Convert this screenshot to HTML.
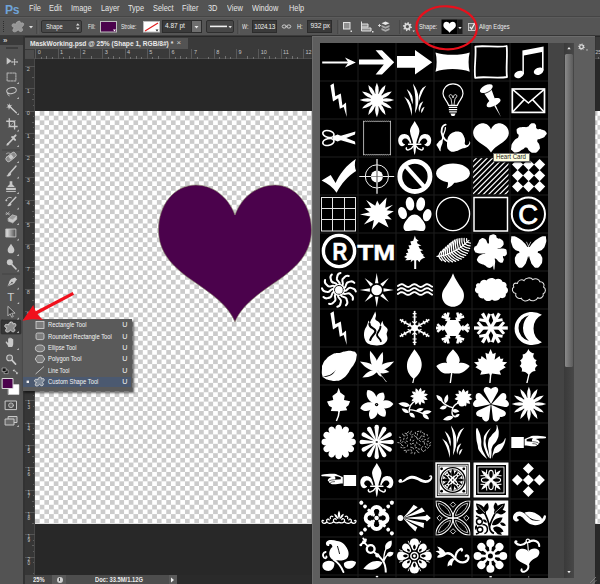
<!DOCTYPE html><html><head><meta charset="utf-8"><title>Photoshop Custom Shape Tool</title><style>
html,body{margin:0;padding:0;}
body{width:600px;height:584px;overflow:hidden;background:#282828;position:relative;font-family:"Liberation Sans","DejaVu Sans",sans-serif;color:#e0e0e0;}
.a{position:absolute;}
.t{position:absolute;white-space:nowrap;line-height:1;}
svg{position:absolute;overflow:visible;}
</style></head><body>
<div class="a" style="left:0px;top:36px;width:600px;height:548px;background:#282828;"></div>
<div class="a" style="left:35px;top:110.6px;width:565px;height:413.7px;background:conic-gradient(#cbcbcb 25%,#fff 0 50%,#cbcbcb 0 75%,#fff 0) 0 0/9.375px 9.375px;"></div>
<svg style="left:0;top:0" width="600" height="584"><path d="M235,215 C228,196 212,185 196,185 C174,185 158.5,205 158.5,230 C158.5,252 172,266 190,279 C212,294 228,305 235,322 C242,305 258,294 280,279 C298,266 311.5,252 311.5,230 C311.5,205 296,185 275,185 C258,185 242,196 235,215 Z" fill="#4b024c" stroke="#8a8a6a" stroke-width="0.6"/></svg>
<div class="a" style="left:24px;top:37px;width:576px;height:12px;background:#3a3a3a;"></div>
<div class="a" style="left:25px;top:38px;width:163px;height:11px;background:#535353;"></div>
<div class="t" style="left:30px;top:39.8px;font-size:7.3px;color:#e8e8e8;font-weight:bold;transform:scaleX(0.905);transform-origin:0 0;">MaskWorking.psd @ 25% (Shape 1, RGB/8#) *</div>
<div class="t" style="left:176.5px;top:39.3px;font-size:8px;color:#c8c8c8;">×</div>
<div class="a" style="left:24px;top:49px;width:576px;height:10px;background:#3a3a3a;"></div>
<div class="a" style="left:24px;top:59px;width:10.5px;height:516px;background:#363636;"></div>
<div class="a" style="left:25px;top:58.2px;width:575px;height:0.8px;background:#4c4c4c;"></div>
<div class="a" style="left:33.7px;top:59px;width:0.8px;height:516px;background:#484848;"></div>
<div class="a" style="left:25px;top:49.5px;width:9px;height:8.5px;background:#4d4d4d;"></div>
<svg style="left:0;top:0" width="600" height="584" shape-rendering="crispEdges"><rect x="35.3" y="49" width="1" height="10" fill="#595959"/><rect x="40.9" y="57.0" width="0.8" height="1.6" fill="#727272"/><rect x="46.4" y="56.4" width="0.8" height="2.2" fill="#727272"/><rect x="52.0" y="57.0" width="0.8" height="1.6" fill="#727272"/><rect x="57.6" y="49" width="1" height="10" fill="#595959"/><rect x="63.2" y="57.0" width="0.8" height="1.6" fill="#727272"/><rect x="68.8" y="56.4" width="0.8" height="2.2" fill="#727272"/><rect x="74.3" y="57.0" width="0.8" height="1.6" fill="#727272"/><rect x="79.9" y="49" width="1" height="10" fill="#595959"/><rect x="85.5" y="57.0" width="0.8" height="1.6" fill="#727272"/><rect x="91.1" y="56.4" width="0.8" height="2.2" fill="#727272"/><rect x="96.6" y="57.0" width="0.8" height="1.6" fill="#727272"/><rect x="102.2" y="49" width="1" height="10" fill="#595959"/><rect x="107.8" y="57.0" width="0.8" height="1.6" fill="#727272"/><rect x="113.4" y="56.4" width="0.8" height="2.2" fill="#727272"/><rect x="118.9" y="57.0" width="0.8" height="1.6" fill="#727272"/><rect x="124.5" y="49" width="1" height="10" fill="#595959"/><rect x="130.1" y="57.0" width="0.8" height="1.6" fill="#727272"/><rect x="135.7" y="56.4" width="0.8" height="2.2" fill="#727272"/><rect x="141.2" y="57.0" width="0.8" height="1.6" fill="#727272"/><rect x="146.8" y="49" width="1" height="10" fill="#595959"/><rect x="152.4" y="57.0" width="0.8" height="1.6" fill="#727272"/><rect x="158.0" y="56.4" width="0.8" height="2.2" fill="#727272"/><rect x="163.5" y="57.0" width="0.8" height="1.6" fill="#727272"/><rect x="169.1" y="49" width="1" height="10" fill="#595959"/><rect x="174.7" y="57.0" width="0.8" height="1.6" fill="#727272"/><rect x="180.3" y="56.4" width="0.8" height="2.2" fill="#727272"/><rect x="185.8" y="57.0" width="0.8" height="1.6" fill="#727272"/><rect x="191.4" y="49" width="1" height="10" fill="#595959"/><rect x="197.0" y="57.0" width="0.8" height="1.6" fill="#727272"/><rect x="202.5" y="56.4" width="0.8" height="2.2" fill="#727272"/><rect x="208.1" y="57.0" width="0.8" height="1.6" fill="#727272"/><rect x="213.7" y="49" width="1" height="10" fill="#595959"/><rect x="219.3" y="57.0" width="0.8" height="1.6" fill="#727272"/><rect x="224.8" y="56.4" width="0.8" height="2.2" fill="#727272"/><rect x="230.4" y="57.0" width="0.8" height="1.6" fill="#727272"/><rect x="236.0" y="49" width="1" height="10" fill="#595959"/><rect x="241.6" y="57.0" width="0.8" height="1.6" fill="#727272"/><rect x="247.2" y="56.4" width="0.8" height="2.2" fill="#727272"/><rect x="252.7" y="57.0" width="0.8" height="1.6" fill="#727272"/><rect x="258.3" y="49" width="1" height="10" fill="#595959"/><rect x="263.9" y="57.0" width="0.8" height="1.6" fill="#727272"/><rect x="269.4" y="56.4" width="0.8" height="2.2" fill="#727272"/><rect x="275.0" y="57.0" width="0.8" height="1.6" fill="#727272"/><rect x="280.6" y="49" width="1" height="10" fill="#595959"/><rect x="286.2" y="57.0" width="0.8" height="1.6" fill="#727272"/><rect x="291.8" y="56.4" width="0.8" height="2.2" fill="#727272"/><rect x="297.3" y="57.0" width="0.8" height="1.6" fill="#727272"/><rect x="302.9" y="49" width="1" height="10" fill="#595959"/><rect x="308.5" y="57.0" width="0.8" height="1.6" fill="#727272"/><rect x="314.1" y="56.4" width="0.8" height="2.2" fill="#727272"/><rect x="319.6" y="57.0" width="0.8" height="1.6" fill="#727272"/><rect x="325.2" y="49" width="1" height="10" fill="#595959"/><rect x="330.8" y="57.0" width="0.8" height="1.6" fill="#727272"/><rect x="336.4" y="56.4" width="0.8" height="2.2" fill="#727272"/><rect x="341.9" y="57.0" width="0.8" height="1.6" fill="#727272"/><rect x="347.5" y="49" width="1" height="10" fill="#595959"/><rect x="353.1" y="57.0" width="0.8" height="1.6" fill="#727272"/><rect x="358.6" y="56.4" width="0.8" height="2.2" fill="#727272"/><rect x="364.2" y="57.0" width="0.8" height="1.6" fill="#727272"/><rect x="369.8" y="49" width="1" height="10" fill="#595959"/><rect x="375.4" y="57.0" width="0.8" height="1.6" fill="#727272"/><rect x="380.9" y="56.4" width="0.8" height="2.2" fill="#727272"/><rect x="386.5" y="57.0" width="0.8" height="1.6" fill="#727272"/><rect x="392.1" y="49" width="1" height="10" fill="#595959"/><rect x="397.7" y="57.0" width="0.8" height="1.6" fill="#727272"/><rect x="403.2" y="56.4" width="0.8" height="2.2" fill="#727272"/><rect x="408.8" y="57.0" width="0.8" height="1.6" fill="#727272"/><rect x="414.4" y="49" width="1" height="10" fill="#595959"/><rect x="420.0" y="57.0" width="0.8" height="1.6" fill="#727272"/><rect x="425.6" y="56.4" width="0.8" height="2.2" fill="#727272"/><rect x="431.1" y="57.0" width="0.8" height="1.6" fill="#727272"/><rect x="436.7" y="49" width="1" height="10" fill="#595959"/><rect x="442.3" y="57.0" width="0.8" height="1.6" fill="#727272"/><rect x="447.9" y="56.4" width="0.8" height="2.2" fill="#727272"/><rect x="453.4" y="57.0" width="0.8" height="1.6" fill="#727272"/><rect x="459.0" y="49" width="1" height="10" fill="#595959"/><rect x="464.6" y="57.0" width="0.8" height="1.6" fill="#727272"/><rect x="470.1" y="56.4" width="0.8" height="2.2" fill="#727272"/><rect x="475.7" y="57.0" width="0.8" height="1.6" fill="#727272"/><rect x="481.3" y="49" width="1" height="10" fill="#595959"/><rect x="486.9" y="57.0" width="0.8" height="1.6" fill="#727272"/><rect x="492.4" y="56.4" width="0.8" height="2.2" fill="#727272"/><rect x="498.0" y="57.0" width="0.8" height="1.6" fill="#727272"/><rect x="503.6" y="49" width="1" height="10" fill="#595959"/><rect x="509.2" y="57.0" width="0.8" height="1.6" fill="#727272"/><rect x="514.8" y="56.4" width="0.8" height="2.2" fill="#727272"/><rect x="520.3" y="57.0" width="0.8" height="1.6" fill="#727272"/><rect x="525.9" y="49" width="1" height="10" fill="#595959"/><rect x="531.5" y="57.0" width="0.8" height="1.6" fill="#727272"/><rect x="537.0" y="56.4" width="0.8" height="2.2" fill="#727272"/><rect x="542.6" y="57.0" width="0.8" height="1.6" fill="#727272"/><rect x="548.2" y="49" width="1" height="10" fill="#595959"/><rect x="553.8" y="57.0" width="0.8" height="1.6" fill="#727272"/><rect x="559.3" y="56.4" width="0.8" height="2.2" fill="#727272"/><rect x="564.9" y="57.0" width="0.8" height="1.6" fill="#727272"/><rect x="570.5" y="49" width="1" height="10" fill="#595959"/><rect x="576.1" y="57.0" width="0.8" height="1.6" fill="#727272"/><rect x="581.6" y="56.4" width="0.8" height="2.2" fill="#727272"/><rect x="587.2" y="57.0" width="0.8" height="1.6" fill="#727272"/><rect x="592.8" y="49" width="1" height="10" fill="#595959"/><rect x="598.4" y="57.0" width="0.8" height="1.6" fill="#727272"/><rect x="603.9" y="56.4" width="0.8" height="2.2" fill="#727272"/><rect x="609.5" y="57.0" width="0.8" height="1.6" fill="#727272"/><rect x="25" y="65.9" width="9.5" height="1" fill="#555"/><rect x="32.6" y="71.5" width="1.6" height="0.8" fill="#5e5e5e"/><rect x="32.0" y="77.1" width="2.2" height="0.8" fill="#5e5e5e"/><rect x="32.6" y="82.6" width="1.6" height="0.8" fill="#5e5e5e"/><rect x="25" y="88.2" width="9.5" height="1" fill="#555"/><rect x="32.6" y="93.8" width="1.6" height="0.8" fill="#5e5e5e"/><rect x="32.0" y="99.4" width="2.2" height="0.8" fill="#5e5e5e"/><rect x="32.6" y="104.9" width="1.6" height="0.8" fill="#5e5e5e"/><rect x="25" y="110.5" width="9.5" height="1" fill="#555"/><rect x="32.6" y="116.1" width="1.6" height="0.8" fill="#5e5e5e"/><rect x="32.0" y="121.7" width="2.2" height="0.8" fill="#5e5e5e"/><rect x="32.6" y="127.2" width="1.6" height="0.8" fill="#5e5e5e"/><rect x="25" y="132.8" width="9.5" height="1" fill="#555"/><rect x="32.6" y="138.4" width="1.6" height="0.8" fill="#5e5e5e"/><rect x="32.0" y="144.0" width="2.2" height="0.8" fill="#5e5e5e"/><rect x="32.6" y="149.5" width="1.6" height="0.8" fill="#5e5e5e"/><rect x="25" y="155.1" width="9.5" height="1" fill="#555"/><rect x="32.6" y="160.7" width="1.6" height="0.8" fill="#5e5e5e"/><rect x="32.0" y="166.3" width="2.2" height="0.8" fill="#5e5e5e"/><rect x="32.6" y="171.8" width="1.6" height="0.8" fill="#5e5e5e"/><rect x="25" y="177.4" width="9.5" height="1" fill="#555"/><rect x="32.6" y="183.0" width="1.6" height="0.8" fill="#5e5e5e"/><rect x="32.0" y="188.6" width="2.2" height="0.8" fill="#5e5e5e"/><rect x="32.6" y="194.1" width="1.6" height="0.8" fill="#5e5e5e"/><rect x="25" y="199.7" width="9.5" height="1" fill="#555"/><rect x="32.6" y="205.3" width="1.6" height="0.8" fill="#5e5e5e"/><rect x="32.0" y="210.9" width="2.2" height="0.8" fill="#5e5e5e"/><rect x="32.6" y="216.4" width="1.6" height="0.8" fill="#5e5e5e"/><rect x="25" y="222.0" width="9.5" height="1" fill="#555"/><rect x="32.6" y="227.6" width="1.6" height="0.8" fill="#5e5e5e"/><rect x="32.0" y="233.2" width="2.2" height="0.8" fill="#5e5e5e"/><rect x="32.6" y="238.7" width="1.6" height="0.8" fill="#5e5e5e"/><rect x="25" y="244.3" width="9.5" height="1" fill="#555"/><rect x="32.6" y="249.9" width="1.6" height="0.8" fill="#5e5e5e"/><rect x="32.0" y="255.5" width="2.2" height="0.8" fill="#5e5e5e"/><rect x="32.6" y="261.0" width="1.6" height="0.8" fill="#5e5e5e"/><rect x="25" y="266.6" width="9.5" height="1" fill="#555"/><rect x="32.6" y="272.2" width="1.6" height="0.8" fill="#5e5e5e"/><rect x="32.0" y="277.8" width="2.2" height="0.8" fill="#5e5e5e"/><rect x="32.6" y="283.3" width="1.6" height="0.8" fill="#5e5e5e"/><rect x="25" y="288.9" width="9.5" height="1" fill="#555"/><rect x="32.6" y="294.5" width="1.6" height="0.8" fill="#5e5e5e"/><rect x="32.0" y="300.0" width="2.2" height="0.8" fill="#5e5e5e"/><rect x="32.6" y="305.6" width="1.6" height="0.8" fill="#5e5e5e"/><rect x="25" y="311.2" width="9.5" height="1" fill="#555"/><rect x="32.6" y="316.8" width="1.6" height="0.8" fill="#5e5e5e"/><rect x="32.0" y="322.4" width="2.2" height="0.8" fill="#5e5e5e"/><rect x="32.6" y="327.9" width="1.6" height="0.8" fill="#5e5e5e"/><rect x="25" y="333.5" width="9.5" height="1" fill="#555"/><rect x="32.6" y="339.1" width="1.6" height="0.8" fill="#5e5e5e"/><rect x="32.0" y="344.6" width="2.2" height="0.8" fill="#5e5e5e"/><rect x="32.6" y="350.2" width="1.6" height="0.8" fill="#5e5e5e"/><rect x="25" y="355.8" width="9.5" height="1" fill="#555"/><rect x="32.6" y="361.4" width="1.6" height="0.8" fill="#5e5e5e"/><rect x="32.0" y="367.0" width="2.2" height="0.8" fill="#5e5e5e"/><rect x="32.6" y="372.5" width="1.6" height="0.8" fill="#5e5e5e"/><rect x="25" y="378.1" width="9.5" height="1" fill="#555"/><rect x="32.6" y="383.7" width="1.6" height="0.8" fill="#5e5e5e"/><rect x="32.0" y="389.2" width="2.2" height="0.8" fill="#5e5e5e"/><rect x="32.6" y="394.8" width="1.6" height="0.8" fill="#5e5e5e"/><rect x="25" y="400.4" width="9.5" height="1" fill="#555"/><rect x="32.6" y="406.0" width="1.6" height="0.8" fill="#5e5e5e"/><rect x="32.0" y="411.5" width="2.2" height="0.8" fill="#5e5e5e"/><rect x="32.6" y="417.1" width="1.6" height="0.8" fill="#5e5e5e"/><rect x="25" y="422.7" width="9.5" height="1" fill="#555"/><rect x="32.6" y="428.3" width="1.6" height="0.8" fill="#5e5e5e"/><rect x="32.0" y="433.9" width="2.2" height="0.8" fill="#5e5e5e"/><rect x="32.6" y="439.4" width="1.6" height="0.8" fill="#5e5e5e"/><rect x="25" y="445.0" width="9.5" height="1" fill="#555"/><rect x="32.6" y="450.6" width="1.6" height="0.8" fill="#5e5e5e"/><rect x="32.0" y="456.1" width="2.2" height="0.8" fill="#5e5e5e"/><rect x="32.6" y="461.7" width="1.6" height="0.8" fill="#5e5e5e"/><rect x="25" y="467.3" width="9.5" height="1" fill="#555"/><rect x="32.6" y="472.9" width="1.6" height="0.8" fill="#5e5e5e"/><rect x="32.0" y="478.5" width="2.2" height="0.8" fill="#5e5e5e"/><rect x="32.6" y="484.0" width="1.6" height="0.8" fill="#5e5e5e"/><rect x="25" y="489.6" width="9.5" height="1" fill="#555"/><rect x="32.6" y="495.2" width="1.6" height="0.8" fill="#5e5e5e"/><rect x="32.0" y="500.8" width="2.2" height="0.8" fill="#5e5e5e"/><rect x="32.6" y="506.3" width="1.6" height="0.8" fill="#5e5e5e"/><rect x="25" y="511.9" width="9.5" height="1" fill="#555"/><rect x="32.6" y="517.5" width="1.6" height="0.8" fill="#5e5e5e"/><rect x="32.0" y="523.0" width="2.2" height="0.8" fill="#5e5e5e"/><rect x="32.6" y="528.6" width="1.6" height="0.8" fill="#5e5e5e"/><rect x="25" y="534.2" width="9.5" height="1" fill="#555"/><rect x="32.6" y="539.8" width="1.6" height="0.8" fill="#5e5e5e"/><rect x="32.0" y="545.4" width="2.2" height="0.8" fill="#5e5e5e"/><rect x="32.6" y="550.9" width="1.6" height="0.8" fill="#5e5e5e"/><rect x="25" y="556.5" width="9.5" height="1" fill="#555"/><rect x="32.6" y="562.1" width="1.6" height="0.8" fill="#5e5e5e"/><rect x="32.0" y="567.6" width="2.2" height="0.8" fill="#5e5e5e"/><rect x="32.6" y="573.2" width="1.6" height="0.8" fill="#5e5e5e"/></svg>
<div class="t" style="left:37.8px;top:50px;font-size:5.5px;color:#c4c4c4;">0</div>
<div class="t" style="left:60.099999999999994px;top:50px;font-size:5.5px;color:#c4c4c4;">1</div>
<div class="t" style="left:82.4px;top:50px;font-size:5.5px;color:#c4c4c4;">2</div>
<div class="t" style="left:104.7px;top:50px;font-size:5.5px;color:#c4c4c4;">3</div>
<div class="t" style="left:127.0px;top:50px;font-size:5.5px;color:#c4c4c4;">4</div>
<div class="t" style="left:149.3px;top:50px;font-size:5.5px;color:#c4c4c4;">5</div>
<div class="t" style="left:171.60000000000002px;top:50px;font-size:5.5px;color:#c4c4c4;">6</div>
<div class="t" style="left:193.89999999999998px;top:50px;font-size:5.5px;color:#c4c4c4;">7</div>
<div class="t" style="left:216.2px;top:50px;font-size:5.5px;color:#c4c4c4;">8</div>
<div class="t" style="left:238.5px;top:50px;font-size:5.5px;color:#c4c4c4;">9</div>
<div class="t" style="left:260.8px;top:50px;font-size:5.5px;color:#c4c4c4;">10</div>
<div class="t" style="left:283.1px;top:50px;font-size:5.5px;color:#c4c4c4;">11</div>
<div class="t" style="left:305.40000000000003px;top:50px;font-size:5.5px;color:#c4c4c4;">12</div>
<div class="t" style="left:327.70000000000005px;top:50px;font-size:5.5px;color:#c4c4c4;">13</div>
<div class="t" style="left:350.0px;top:50px;font-size:5.5px;color:#c4c4c4;">14</div>
<div class="t" style="left:372.3px;top:50px;font-size:5.5px;color:#c4c4c4;">15</div>
<div class="t" style="left:394.6px;top:50px;font-size:5.5px;color:#c4c4c4;">16</div>
<div class="t" style="left:416.90000000000003px;top:50px;font-size:5.5px;color:#c4c4c4;">17</div>
<div class="t" style="left:439.20000000000005px;top:50px;font-size:5.5px;color:#c4c4c4;">18</div>
<div class="t" style="left:461.5px;top:50px;font-size:5.5px;color:#c4c4c4;">19</div>
<div class="t" style="left:483.8px;top:50px;font-size:5.5px;color:#c4c4c4;">20</div>
<div class="t" style="left:506.1px;top:50px;font-size:5.5px;color:#c4c4c4;">21</div>
<div class="t" style="left:528.4px;top:50px;font-size:5.5px;color:#c4c4c4;">22</div>
<div class="t" style="left:550.6999999999999px;top:50px;font-size:5.5px;color:#c4c4c4;">23</div>
<div class="t" style="left:573.0px;top:50px;font-size:5.5px;color:#c4c4c4;">24</div>
<div class="t" style="left:595.3px;top:50px;font-size:5.5px;color:#c4c4c4;">25</div>
<div class="t" style="left:26.8px;top:66.7px;font-size:5.5px;color:#c0c0c0;">2</div>
<div class="t" style="left:26.8px;top:89.0px;font-size:5.5px;color:#c0c0c0;">1</div>
<div class="t" style="left:26.8px;top:111.3px;font-size:5.5px;color:#c0c0c0;">0</div>
<div class="t" style="left:26.8px;top:133.60000000000002px;font-size:5.5px;color:#c0c0c0;">1</div>
<div class="t" style="left:26.8px;top:155.90000000000003px;font-size:5.5px;color:#c0c0c0;">2</div>
<div class="t" style="left:26.8px;top:178.20000000000002px;font-size:5.5px;color:#c0c0c0;">3</div>
<div class="t" style="left:26.8px;top:200.50000000000003px;font-size:5.5px;color:#c0c0c0;">4</div>
<div class="t" style="left:26.8px;top:222.8px;font-size:5.5px;color:#c0c0c0;">5</div>
<div class="t" style="left:26.8px;top:245.10000000000002px;font-size:5.5px;color:#c0c0c0;">6</div>
<div class="t" style="left:26.8px;top:267.40000000000003px;font-size:5.5px;color:#c0c0c0;">7</div>
<div class="t" style="left:26.8px;top:289.7px;font-size:5.5px;color:#c0c0c0;">8</div>
<div class="t" style="left:26.8px;top:312.00000000000006px;font-size:5.5px;color:#c0c0c0;">9</div>
<div class="t" style="left:27.5px;top:334.5px;font-size:4.6px;color:#d0d0d0;">1</div>
<div class="t" style="left:27.5px;top:338.7px;font-size:4.6px;color:#d0d0d0;">0</div>
<div class="t" style="left:27.5px;top:356.80000000000007px;font-size:4.6px;color:#d0d0d0;">1</div>
<div class="t" style="left:27.5px;top:361.00000000000006px;font-size:4.6px;color:#d0d0d0;">1</div>
<div class="t" style="left:27.5px;top:379.1px;font-size:4.6px;color:#d0d0d0;">1</div>
<div class="t" style="left:27.5px;top:383.3px;font-size:4.6px;color:#d0d0d0;">2</div>
<div class="t" style="left:27.5px;top:401.4px;font-size:4.6px;color:#d0d0d0;">1</div>
<div class="t" style="left:27.5px;top:405.59999999999997px;font-size:4.6px;color:#d0d0d0;">3</div>
<div class="t" style="left:27.5px;top:423.70000000000005px;font-size:4.6px;color:#d0d0d0;">1</div>
<div class="t" style="left:27.5px;top:427.90000000000003px;font-size:4.6px;color:#d0d0d0;">4</div>
<div class="t" style="left:27.5px;top:446.0px;font-size:4.6px;color:#d0d0d0;">1</div>
<div class="t" style="left:27.5px;top:450.2px;font-size:4.6px;color:#d0d0d0;">5</div>
<div class="t" style="left:27.5px;top:468.30000000000007px;font-size:4.6px;color:#d0d0d0;">1</div>
<div class="t" style="left:27.5px;top:472.50000000000006px;font-size:4.6px;color:#d0d0d0;">6</div>
<div class="t" style="left:27.5px;top:490.6px;font-size:4.6px;color:#d0d0d0;">1</div>
<div class="t" style="left:27.5px;top:494.8px;font-size:4.6px;color:#d0d0d0;">7</div>
<div class="t" style="left:27.5px;top:512.9px;font-size:4.6px;color:#d0d0d0;">1</div>
<div class="t" style="left:27.5px;top:517.1px;font-size:4.6px;color:#d0d0d0;">8</div>
<div class="t" style="left:27.5px;top:535.2px;font-size:4.6px;color:#d0d0d0;">1</div>
<div class="t" style="left:27.5px;top:539.4000000000001px;font-size:4.6px;color:#d0d0d0;">9</div>
<div class="t" style="left:27.5px;top:557.5px;font-size:4.6px;color:#d0d0d0;">2</div>
<div class="t" style="left:27.5px;top:561.7px;font-size:4.6px;color:#d0d0d0;">0</div>
<div class="a" style="left:24px;top:575.4px;width:576px;height:9px;background:#2a2a2a;"></div>
<div class="a" style="left:24px;top:575.4px;width:28px;height:9px;background:#474747;"></div>
<div class="a" style="left:52px;top:575.4px;width:14px;height:9px;background:#5a5a5a;"></div>
<div class="a" style="left:66px;top:575.4px;width:102.5px;height:9px;background:#4d4d4d;"></div>
<div class="a" style="left:168.5px;top:575.4px;width:8px;height:9px;background:#5a5a5a;"></div>
<div class="t" style="left:32.8px;top:576.6px;font-size:6.8px;color:#ececec;font-weight:bold;transform:scaleX(0.852);transform-origin:0 0;">25%</div>
<div class="a" style="left:56.5px;top:577px;width:6px;height:6px;border-radius:50%;background:#cfcfcf"></div>
<div class="a" style="left:59px;top:578px;width:1.2px;height:3px;background:#444"></div>
<div class="t" style="left:94.8px;top:576.6px;font-size:6.8px;color:#ececec;font-weight:bold;transform:scaleX(0.852);transform-origin:0 0;">Doc: 33.5M/1.12G</div>
<svg style="left:0;top:0" width="600" height="584"><path d="M171,577.6 l3,2.4 l-3,2.4 z" fill="#f0f0f0"/></svg>
<div class="a" style="left:0px;top:36px;width:24px;height:548px;background:#535353;"></div>
<div class="a" style="left:0px;top:36px;width:24px;height:9px;background:#3a3a3a;"></div>
<div class="t" style="left:3px;top:36.5px;font-size:8px;color:#ccc;font-weight:bold">»</div>
<div class="a" style="left:6px;top:47px;width:12px;height:2px;background:#3e3e3e;"></div>
<div class="a" style="left:23px;top:36px;width:1.5px;height:548px;background:#323232;"></div>
<div class="a" style="left:0px;top:0px;width:600px;height:17px;background:#535353;"></div>
<div class="t" style="left:4.5px;top:2.5px;font-size:13.5px;color:#6fa3d8;font-weight:bold;letter-spacing:-0.3px;transform:scaleX(0.9);transform-origin:0 0">Ps</div>
<div class="t" style="left:28.5px;top:4.3px;font-size:8.3px;color:#e6e6e6;transform:scaleX(0.89);transform-origin:0 0">File</div>
<div class="t" style="left:49px;top:4.3px;font-size:8.3px;color:#e6e6e6;transform:scaleX(0.89);transform-origin:0 0">Edit</div>
<div class="t" style="left:70.5px;top:4.3px;font-size:8.3px;color:#e6e6e6;transform:scaleX(0.89);transform-origin:0 0">Image</div>
<div class="t" style="left:100.5px;top:4.3px;font-size:8.3px;color:#e6e6e6;transform:scaleX(0.89);transform-origin:0 0">Layer</div>
<div class="t" style="left:127.5px;top:4.3px;font-size:8.3px;color:#e6e6e6;transform:scaleX(0.89);transform-origin:0 0">Type</div>
<div class="t" style="left:153px;top:4.3px;font-size:8.3px;color:#e6e6e6;transform:scaleX(0.89);transform-origin:0 0">Select</div>
<div class="t" style="left:181.5px;top:4.3px;font-size:8.3px;color:#e6e6e6;transform:scaleX(0.89);transform-origin:0 0">Filter</div>
<div class="t" style="left:207.5px;top:4.3px;font-size:8.3px;color:#e6e6e6;transform:scaleX(0.89);transform-origin:0 0">3D</div>
<div class="t" style="left:226.5px;top:4.3px;font-size:8.3px;color:#e6e6e6;transform:scaleX(0.89);transform-origin:0 0">View</div>
<div class="t" style="left:252px;top:4.3px;font-size:8.3px;color:#e6e6e6;transform:scaleX(0.89);transform-origin:0 0">Window</div>
<div class="t" style="left:288.5px;top:4.3px;font-size:8.3px;color:#e6e6e6;transform:scaleX(0.89);transform-origin:0 0">Help</div>
<div class="a" style="left:0px;top:16px;width:600px;height:20px;background:#555555;border-top:1px solid #454545;border-bottom:1px solid #3c3c3c;box-sizing:border-box"></div>
<div class="a" style="left:0px;top:17px;width:600px;height:1px;background:#5c5c5c;"></div>
<!--TOOLS-->
<svg style="left:-0.7px;top:0" width="600" height="584" fill="none" stroke-linecap="round" stroke-linejoin="round"><rect x="2" y="320" width="20" height="14" rx="1" fill="#353535" stroke="#2a2a2a" stroke-width="0.6"/><g transform="translate(12.5,61.5) scale(0.88) translate(-12.5,-61.5)"><path d="M7,57 L7,65 L12.5,61 Z" fill="#c8c8c8" stroke="none"/><path d="M13,62 h6 M16,59 v6" stroke="#c8c8c8" stroke-width="1"/><path d="M16,58 l-1.2,1.5 h2.4 z M16,66 l-1.2,-1.5 h2.4 z M12,62 l1.5,-1.2 v2.4 z M20,62 l-1.5,-1.2 v2.4 z" fill="#c8c8c8" stroke="none"/></g><g transform="translate(12.5,77) scale(0.88) translate(-12.5,-77)"><rect x="7.5" y="72.5" width="10" height="9" stroke="#c8c8c8" stroke-width="1" stroke-dasharray="2 1.2"/></g><path d="M19.8,84 l0,-2 l-2,2 z" fill="#c4c4c4" stroke="none"/><g transform="translate(12.5,91.5) scale(0.88) translate(-12.5,-91.5)"><ellipse cx="12.5" cy="90.5" rx="5.5" ry="3.4" stroke="#c8c8c8" stroke-width="1.1" transform="rotate(-12 12.5 90.5)"/><path d="M9,93 c-1.5,1 -1,3 1,3.5" stroke="#c8c8c8" stroke-width="0.9"/></g><path d="M19.8,99 l0,-2 l-2,2 z" fill="#c4c4c4" stroke="none"/><g transform="translate(12.5,107.5) scale(0.88) translate(-12.5,-107.5)"><path d="M11,107 L18,113.5" stroke="#c8c8c8" stroke-width="1.6"/><path d="M10,102.5 l0.8,2.4 l2.6,-0.6 l-1.8,1.9 l1.6,2 l-2.6,-0.4 l-1,2.4 l-0.6,-2.6 l-2.6,-0.2 l2.2,-1.4 l-1.2,-2.4 l2.2,1.2 z" fill="#c8c8c8" stroke="none"/></g><path d="M19.8,115 l0,-2 l-2,2 z" fill="#c4c4c4" stroke="none"/><g transform="translate(12.5,123) scale(0.88) translate(-12.5,-123)"><path d="M10,117.5 V127 H19.5 M6.5,121 H16 V130.5" stroke="#c8c8c8" stroke-width="1.5" stroke-linecap="butt"/><path d="M9,128 L17,120" stroke="#c8c8c8" stroke-width="0.6"/></g><path d="M19.8,131.5 l0,-2 l-2,2 z" fill="#c4c4c4" stroke="none"/><g transform="translate(12.5,139.5) scale(0.88) translate(-12.5,-139.5)"><path d="M8,145 L14,139" stroke="#c8c8c8" stroke-width="1.8"/><path d="M13.2,136.6 l3.4,3.4 M15,137 L17.2,134.8" stroke="#c8c8c8" stroke-width="2.2"/><path d="M7.2,145.8 l0.8,-2 l1.2,1.2 z" fill="#c8c8c8" stroke="#c8c8c8" stroke-width="0.6"/></g><path d="M19.8,147 l0,-2 l-2,2 z" fill="#c4c4c4" stroke="none"/><rect x="3" y="149.5" width="18" height="1" fill="#454545" stroke="none"/><g transform="translate(12,157) scale(0.88) translate(-12,-157)"><g transform="rotate(-38 12 157)"><rect x="5.5" y="154" width="13" height="6" rx="2.6" fill="#8a8a8a" stroke="#c8c8c8" stroke-width="0.9"/><rect x="10" y="154.6" width="4" height="4.8" fill="#c8c8c8" stroke="none"/></g><path d="M6.5,153.5 a3,3 0 0 1 5,0" stroke="#c8c8c8" stroke-width="0.8"/></g><path d="M19.8,163 l0,-2 l-2,2 z" fill="#c4c4c4" stroke="none"/><g transform="translate(12.5,171) scale(0.88) translate(-12.5,-171)"><path d="M17.5,165.5 L11,173" stroke="#c8c8c8" stroke-width="1.7"/><path d="M10.6,172.6 c-1.6,0.2 -2,1.6 -2.4,2.8 c-0.3,0.8 -1,1.2 -1.6,1.4 c2,0.8 5,0.2 5.6,-2.6 z" fill="#c8c8c8" stroke="none"/></g><path d="M19.8,178.5 l0,-2 l-2,2 z" fill="#c4c4c4" stroke="none"/><g transform="translate(12,186.5) scale(0.88) translate(-12,-186.5)"><path d="M10.5,180.5 h3 v3.5 c0,1 2.5,1.6 2.5,3 h-8 c0,-1.4 2.5,-2 2.5,-3 z" fill="#c8c8c8" stroke="none"/><rect x="6.5" y="188" width="11" height="2.6" fill="#c8c8c8" stroke="none"/><rect x="6.5" y="191.6" width="11" height="1" fill="#c8c8c8" stroke="none"/></g><path d="M19.8,194 l0,-2 l-2,2 z" fill="#c4c4c4" stroke="none"/><g transform="translate(12,202) scale(0.88) translate(-12,-202)"><path d="M17.5,196.5 L11.5,203" stroke="#c8c8c8" stroke-width="1.6"/><path d="M11.2,202.8 c-1.6,0.2 -2,1.4 -2.4,2.4 c-0.3,0.8 -1,1 -1.6,1.2 c2,0.8 4.8,0.2 5.4,-2.2 z" fill="#c8c8c8" stroke="none"/><path d="M6.5,200.5 a4,4 0 0 1 6,-3.4" stroke="#c8c8c8" stroke-width="1"/><path d="M5.2,199.4 l1.4,2 l1.6,-1.8 z" fill="#c8c8c8" stroke="none"/></g><path d="M19.8,209.5 l0,-2 l-2,2 z" fill="#c4c4c4" stroke="none"/><g transform="translate(12.5,217.5) scale(0.88) translate(-12.5,-217.5)"><path d="M9,218.5 l4.5,-4 l5,1.5 l-4.5,4.2 z" fill="#9a9a9a" stroke="#c8c8c8" stroke-width="0.8"/><path d="M9,218.5 l5,1.7 v3.4 l-5,-1.8 z M14,220.2 l4.5,-4.2 v3.4 l-4.5,4.2" fill="#c8c8c8" stroke="#c8c8c8" stroke-width="0.6"/><path d="M6.5,211.5 l3.4,3 M10,211 l-3.4,3.4 M6,213.4 h4.6" stroke="#c8c8c8" stroke-width="0.7"/></g><path d="M19.8,225 l0,-2 l-2,2 z" fill="#c4c4c4" stroke="none"/><defs><linearGradient id="gr" x1="0" x2="1"><stop offset="0" stop-color="#e8e8e8"/><stop offset="1" stop-color="#4a4a4a"/></linearGradient></defs><g transform="translate(12,233) scale(0.88) translate(-12,-233)"><rect x="6.5" y="228.5" width="11" height="9" fill="url(#gr)" stroke="#c8c8c8" stroke-width="1"/></g><path d="M19.8,240.5 l0,-2 l-2,2 z" fill="#c4c4c4" stroke="none"/><g transform="translate(12,249) scale(0.88) translate(-12,-249)"><path d="M12,243 c1.6,2.8 3.8,4.6 3.8,7 a3.8,3.8 0 0 1 -7.6,0 c0,-2.4 2.2,-4.2 3.8,-7 z" fill="#c8c8c8" stroke="none"/></g><path d="M19.8,256 l0,-2 l-2,2 z" fill="#c4c4c4" stroke="none"/><g transform="translate(12.5,265) scale(0.88) translate(-12.5,-265)"><circle cx="10.6" cy="262" r="3.4" fill="#c8c8c8" stroke="none"/><path d="M13,264.6 L17.6,269.4" stroke="#c8c8c8" stroke-width="1.8"/></g><path d="M19.8,271.5 l0,-2 l-2,2 z" fill="#c4c4c4" stroke="none"/><rect x="3" y="273.5" width="18" height="1" fill="#454545" stroke="none"/><g transform="translate(12.5,282) scale(0.88) translate(-12.5,-282)"><path d="M16.5,277 l2.4,2.4 l-1.6,1.2 c-0.6,2.6 -2.4,4.4 -6,5 l-3.4,1.4 l1.4,-3.4 c0.6,-3.6 2.4,-5.4 5,-6 z" fill="#c8c8c8" stroke="none"/><circle cx="13" cy="282.6" r="1" fill="#535353" stroke="none"/><path d="M8,287 l4.4,-4" stroke="#535353" stroke-width="0.6"/></g><path d="M19.8,289.5 l0,-2 l-2,2 z" fill="#c4c4c4" stroke="none"/><g transform="translate(12,311.5) scale(0.88) translate(-12,-311.5)"><path d="M8.5,306 V316.5 L11,314 L12.8,318 L14.6,317.2 L12.8,313.4 H16.2 Z" fill="#3c3c3c" stroke="#c8c8c8" stroke-width="0.9"/></g><path d="M19.8,319.5 l0,-2 l-2,2 z" fill="#c4c4c4" stroke="none"/><path transform="translate(11.5,327) scale(0.95)" d="M0,-5 C1.5,-6 3,-5 2.6,-3 C4,-4.4 6.4,-3.6 5.6,-1.6 C5,0 3.4,0.4 3.6,1.4 C5,2.4 5,4.6 3.2,5 C1.6,5.4 0.8,3.6 0,3.4 C-1.4,4.8 -3,6 -4.6,5 C-6,4 -4.6,2 -3.6,1 C-5.4,0.8 -6.6,-0.4 -5.8,-2 C-5,-3.4 -3,-2.6 -1.8,-2.2 C-2.2,-3.6 -1.4,-4.6 0,-5 Z" fill="#8a8a8a" stroke="#dadada" stroke-width="0.9"/><path d="M19.8,333 l0,-2 l-2,2 z" fill="#c4c4c4" stroke="none"/><g transform="translate(11.5,342) scale(0.88) translate(-11.5,-342)"><path d="M8.2,345.5 l-2,-2.6 c-0.6,-1 0.6,-1.8 1.4,-1 l1.2,1.2 v-4.6 c0,-1 1.4,-1 1.4,0 v-1 c0,-1 1.5,-1 1.5,0 v0.6 c0,-1 1.5,-1 1.5,0 v1 c0,-0.9 1.4,-0.9 1.4,0 v5 c0,1.6 -0.6,2.6 -1.2,3.6 h-4.4 z" fill="#c8c8c8" stroke="none"/></g><path d="M19.8,350 l0,-2 l-2,2 z" fill="#c4c4c4" stroke="none"/><g transform="translate(12,360) scale(0.88) translate(-12,-360)"><circle cx="10.4" cy="357.6" r="3.3" fill="#6a6a6a" stroke="#c8c8c8" stroke-width="1.2"/><path d="M13,360.2 L17.2,364.6" stroke="#c8c8c8" stroke-width="1.9"/></g><rect x="5.5" y="370" width="3.6" height="3.6" fill="#111" stroke="#ddd" stroke-width="0.5"/><rect x="3.5" y="368" width="3.6" height="3.6" fill="#111" stroke="#ddd" stroke-width="0.5"/><path d="M14.5,370.5 a3,3 0 0 1 3.4,3.2" stroke="#c8c8c8" stroke-width="0.9"/><path d="M15.4,369 l-1.8,1.4 l1.8,1.4 z M16.6,372.6 l1.4,1.9 l1.3,-1.9 z" fill="#c8c8c8" stroke="none"/><rect x="9.5" y="384.5" width="10.5" height="10" fill="#ffffff" stroke="#d8d8d8" stroke-width="0.6"/><rect x="3.5" y="378.5" width="10.5" height="10" fill="#4b024c" stroke="#d8d8d8" stroke-width="1"/><rect x="6.5" y="401" width="11" height="8.6" fill="#4a4a4a" stroke="#c8c8c8" stroke-width="1"/><circle cx="12" cy="405.3" r="2.4" fill="#6a6a6a" stroke="#c8c8c8" stroke-width="0.8"/><rect x="9.5" y="416.5" width="8.5" height="6" fill="#6a6a6a" stroke="#c8c8c8" stroke-width="1"/><rect x="6.5" y="419" width="8.5" height="6" fill="#6a6a6a" stroke="#c8c8c8" stroke-width="1"/><path d="M19.8,427 l0,-2 l-2,2 z" fill="#c4c4c4" stroke="none"/></svg>
<div class="t" style="left:7.2px;top:291px;font-size:11.6px;color:#cccccc;font-family:"Liberation Serif",serif;">T</div>
<svg style="left:0;top:0" width="600" height="584"><path d="M19.1,304 l0,-2 l-2,2 z" fill="#c4c4c4"/></svg>
<svg style="left:0;top:0" width="600" height="584"><rect x="3" y="21" width="1" height="1" fill="#2e2e2e"/><rect x="3" y="23" width="1" height="1" fill="#2e2e2e"/><rect x="3" y="25" width="1" height="1" fill="#2e2e2e"/><rect x="3" y="27" width="1" height="1" fill="#2e2e2e"/><rect x="3" y="29" width="1" height="1" fill="#2e2e2e"/><rect x="3" y="31" width="1" height="1" fill="#2e2e2e"/><path transform="translate(18,26.5) scale(1.0)" d="M0,-5 C1.5,-6 3,-5 2.6,-3 C4,-4.4 6.4,-3.6 5.6,-1.6 C5,0 3.4,0.4 3.6,1.4 C5,2.4 5,4.6 3.2,5 C1.6,5.4 0.8,3.6 0,3.4 C-1.4,4.8 -3,6 -4.6,5 C-6,4 -4.6,2 -3.6,1 C-5.4,0.8 -6.6,-0.4 -5.8,-2 C-5,-3.4 -3,-2.6 -1.8,-2.2 C-2.2,-3.6 -1.4,-4.6 0,-5 Z" fill="#969696" stroke="#b4b4b4" stroke-width="0.6"/><path d="M29,26 l4,0 l-2,2.5 z" fill="#ddd"/><rect x="36.5" y="20" width="1" height="14" fill="#3d3d3d"/><rect x="37.5" y="20" width="1" height="14" fill="#626262"/><rect x="41.5" y="20.5" width="40" height="12" rx="1.5" fill="#474747" stroke="#2f2f2f" stroke-width="1"/><path d="M76,25.5 l1.8,-2.2 l1.8,2.2 z M76,27.5 l1.8,2.2 l1.8,-2.2 z" fill="#ddd"/><rect x="100.5" y="21.5" width="16" height="10.5" fill="#4b024c" stroke="#bdbdbd" stroke-width="1"/><path d="M113,29.5 l3,0 l-1.5,2 z" fill="#fff"/><rect x="143.5" y="21.5" width="16" height="10.5" fill="#fff" stroke="#bdbdbd" stroke-width="1"/><path d="M145,31 L158,23" stroke="#e02020" stroke-width="1.3"/><path d="M155.5,29.5 l3,0 l-1.5,2 z" fill="#222"/><rect x="162.5" y="20.5" width="29" height="12" fill="#3a3a3a" stroke="#2c2c2c"/><rect x="191.5" y="20.5" width="10" height="12" fill="#6e6e6e" stroke="#2c2c2c"/><path d="M194.5,26 l4,0 l-2,2.4 z" fill="#e8e8e8"/><rect x="206.5" y="20.5" width="27" height="12" rx="1.5" fill="#474747" stroke="#2f2f2f"/><rect x="210" y="25.6" width="17" height="1.6" fill="#f0f0f0"/><path d="M228.5,26 l3.4,0 l-1.7,2.2 z" fill="#ddd"/><rect x="237.5" y="20" width="1" height="14" fill="#3d3d3d"/><rect x="238.5" y="20" width="1" height="14" fill="#626262"/><rect x="252.5" y="20.5" width="24" height="12" fill="#3a3a3a" stroke="#2c2c2c"/><g fill="none" stroke="#cfcfcf" stroke-width="1"><ellipse cx="284.2" cy="26.5" rx="2" ry="1.6"/><ellipse cx="288.8" cy="26.5" rx="2" ry="1.6"/><path d="M285.5,26.5 L287.5,26.5"/></g><rect x="307.5" y="20.5" width="24" height="12" fill="#3a3a3a" stroke="#2c2c2c"/><rect x="337.5" y="20" width="1" height="14" fill="#3d3d3d"/><rect x="338.5" y="20" width="1" height="14" fill="#626262"/><rect x="343.5" y="22.5" width="6.5" height="6.5" fill="#8f8f8f" stroke="#e0e0e0" stroke-width="1"/><rect x="350.5" y="30.5" width="1.5" height="1.5" fill="#ddd"/><path d="M361.5,21.5 L361.5,31 M361.5,24 L368,24 L368,27 L361.5,27 M361.5,28 L371,28 L371,31 L361.5,31" fill="#8f8f8f" stroke="#e0e0e0" stroke-width="1"/><rect x="372" y="31" width="1.5" height="1.5" fill="#ddd"/><path d="M378,25.5 h3 M379.5,24 v3" stroke="#ddd" stroke-width="0.9"/><path d="M385.5,21.5 l4,1.8 l-4,1.8 l-4,-1.8 z" fill="#e8e8e8"/><path d="M381.5,25 l4,1.8 l4,-1.8 v2 l-4,1.8 l-4,-1.8 z M381.5,28 l4,1.8 l4,-1.8 v2 l-4,1.8 l-4,-1.8 z" fill="#a8a8a8"/><rect x="399.5" y="20" width="1" height="14" fill="#3d3d3d"/><rect x="400.5" y="20" width="1" height="14" fill="#626262"/><path fill-rule="evenodd" d="M411.98,27.05 L411.80,27.94 L410.31,28.16 L409.95,28.69 L410.32,30.16 L409.57,30.66 L408.36,29.76 L407.72,29.88 L406.95,31.18 L406.06,31.00 L405.84,29.51 L405.31,29.15 L403.84,29.52 L403.34,28.77 L404.24,27.56 L404.12,26.92 L402.82,26.15 L403.00,25.26 L404.49,25.04 L404.85,24.51 L404.48,23.04 L405.23,22.54 L406.44,23.44 L407.08,23.32 L407.85,22.02 L408.74,22.20 L408.96,23.69 L409.49,24.05 L410.96,23.68 L411.46,24.43 L410.56,25.64 L410.68,26.28 Z M405.79999999999995,26.6 a1.6,1.6 0 1,0 3.2,0 a1.6,1.6 0 1,0 -3.2,0 Z" fill="#d8d8d8"/><path d="M412.5,30.5 l2.4,0 l-1.2,1.6 z" fill="#ddd"/><rect x="441.5" y="19.5" width="16" height="14.5" fill="#000"/><rect x="457.5" y="19.5" width="5" height="14.5" fill="#1c1c1c"/><path transform="translate(449.6,26.6) scale(0.92)" d="M0,-3 C-1,-6 -6.6,-6.4 -6.8,-1.6 C-6.8,2 -2,3.4 0,6.6 C2,3.4 6.8,2 6.8,-1.6 C6.6,-6.4 1,-6 0,-3 Z" fill="#fff"/><path d="M458.3,27 l3.4,0 l-1.7,2.2 z" fill="#eee"/><rect x="468.5" y="23.5" width="7" height="7" fill="#6a6a6a" stroke="#d0d0d0" stroke-width="0.9"/><path d="M469.8,26.8 L471.6,29 L475.2,22.6" fill="none" stroke="#f4f4f4" stroke-width="1.2"/></svg>
<div class="t" style="left:45.8px;top:22.8px;font-size:7.5px;color:#ececec;transform:scaleX(0.765);transform-origin:0 0;">Shape</div>
<div class="t" style="left:88px;top:22.8px;font-size:7.5px;color:#ececec;transform:scaleX(0.634);transform-origin:0 0;">Fill:</div>
<div class="t" style="left:120.5px;top:22.8px;font-size:7.5px;color:#ececec;transform:scaleX(0.648);transform-origin:0 0;">Stroke:</div>
<div class="t" style="left:165px;top:23.4px;font-size:6.5px;color:#f0f0f0;">4.87 pt</div>
<div class="t" style="left:241.8px;top:22.8px;font-size:7.5px;color:#ececec;transform:scaleX(0.709);transform-origin:0 0;">W:</div>
<div class="t" style="left:254.3px;top:23.6px;font-size:6.3px;color:#f0f0f0;letter-spacing:-0.3px">1024.13</div>
<div class="t" style="left:297.3px;top:22.8px;font-size:7.5px;color:#ececec;transform:scaleX(0.747);transform-origin:0 0;">H:</div>
<div class="t" style="left:310.5px;top:23.4px;font-size:6.8px;color:#f0f0f0;letter-spacing:-0.2px">932 px</div>
<div class="t" style="left:419.4px;top:22.8px;font-size:7.5px;color:#ececec;transform:scaleX(0.766);transform-origin:0 0;">Shape:</div>
<div class="t" style="left:479px;top:22.8px;font-size:7.5px;color:#ececec;transform:scaleX(0.765);transform-origin:0 0;">Align Edges</div>
<div class="a" style="left:22px;top:319px;width:110px;height:72px;background:#5a5a5a;box-shadow:1.5px 1.5px 2px rgba(0,0,0,0.55);border-left:1px solid #4a4a4a;box-sizing:border-box"></div>
<div class="a" style="left:23px;top:376.5px;width:108px;height:10.5px;background:#4b5970;"></div>
<svg style="left:0;top:0" width="600" height="584" fill="#7d7d7d" stroke="#d8d8d8" stroke-width="0.8"><rect x="36" y="321.5" width="8" height="7"/><rect x="36" y="333" width="8" height="6.6" rx="1.6"/><ellipse cx="40" cy="348.4" rx="4.6" ry="3.4"/><path d="M37.6,355.4 h4.8 l2.4,3.6 l-2.4,3.6 h-4.8 l-2.4,-3.6 z"/><path d="M35.6,374 L44,366.5" fill="none"/><path transform="translate(39.5,381.6) scale(0.82)" d="M0,-5 C1.5,-6 3,-5 2.6,-3 C4,-4.4 6.4,-3.6 5.6,-1.6 C5,0 3.4,0.4 3.6,1.4 C5,2.4 5,4.6 3.2,5 C1.6,5.4 0.8,3.6 0,3.4 C-1.4,4.8 -3,6 -4.6,5 C-6,4 -4.6,2 -3.6,1 C-5.4,0.8 -6.6,-0.4 -5.8,-2 C-5,-3.4 -3,-2.6 -1.8,-2.2 C-2.2,-3.6 -1.4,-4.6 0,-5 Z" fill="#7a8696" stroke="#e0e0e0" stroke-width="1"/><rect x="26.6" y="380.6" width="2.4" height="2.4" fill="#f0f0f0" stroke="none"/></svg>
<div class="t" style="left:48px;top:321.3px;font-size:7.2px;color:#f4f4f4;transform:scaleX(0.811);transform-origin:0 0;">Rectangle Tool</div>
<div class="t" style="left:122.3px;top:321.3px;font-size:7.2px;color:#f4f4f4;">U</div>
<div class="t" style="left:48px;top:332.63px;font-size:7.2px;color:#f4f4f4;transform:scaleX(0.813);transform-origin:0 0;">Rounded Rectangle Tool</div>
<div class="t" style="left:122.3px;top:332.63px;font-size:7.2px;color:#f4f4f4;">U</div>
<div class="t" style="left:48px;top:343.96000000000004px;font-size:7.2px;color:#f4f4f4;transform:scaleX(0.785);transform-origin:0 0;">Ellipse Tool</div>
<div class="t" style="left:122.3px;top:343.96000000000004px;font-size:7.2px;color:#f4f4f4;">U</div>
<div class="t" style="left:48px;top:355.29px;font-size:7.2px;color:#f4f4f4;transform:scaleX(0.815);transform-origin:0 0;">Polygon Tool</div>
<div class="t" style="left:122.3px;top:355.29px;font-size:7.2px;color:#f4f4f4;">U</div>
<div class="t" style="left:48px;top:366.62px;font-size:7.2px;color:#f4f4f4;transform:scaleX(0.749);transform-origin:0 0;">Line Tool</div>
<div class="t" style="left:122.3px;top:366.62px;font-size:7.2px;color:#f4f4f4;">U</div>
<div class="t" style="left:48px;top:377.95px;font-size:7.2px;color:#f4f4f4;transform:scaleX(0.805);transform-origin:0 0;">Custom Shape Tool</div>
<div class="t" style="left:122.3px;top:377.95px;font-size:7.2px;color:#f4f4f4;">U</div>
<div class="a" style="left:312px;top:35.6px;width:282.5px;height:560px;background:#5e5e5e;border-left:1px solid #6c6c6c;border-top:1px solid #6c6c6c;box-sizing:border-box;box-shadow:0 0 1px #222"></div>
<div class="a" style="left:320px;top:43px;width:228px;height:534.5px;background:#000;"></div>
<div class="a" style="left:548px;top:43px;width:16px;height:534.5px;background:#444444;"></div>
<div class="a" style="left:564px;top:43px;width:10px;height:534.5px;background:linear-gradient(90deg,#3a3a3a,#474747)"></div>
<div class="a" style="left:565px;top:54px;width:8px;height:313px;border-radius:1.5px;background:linear-gradient(90deg,#8a8a8a,#777 40%,#5c5c5c)"></div>
<svg style="left:0;top:0" width="600" height="584"><path d="M567.3,49.3 l3.4,0 l-1.7,-2.3 z" fill="#eee"/><path d="M567.3,571 l3.4,0 l-1.7,2.3 z" fill="#eee"/><path fill-rule="evenodd" d="M584.88,47.13 L584.75,47.79 L583.62,47.93 L583.36,48.32 L583.66,49.43 L583.10,49.80 L582.20,49.10 L581.74,49.19 L581.17,50.18 L580.51,50.05 L580.37,48.92 L579.98,48.66 L578.87,48.96 L578.50,48.40 L579.20,47.50 L579.11,47.04 L578.12,46.47 L578.25,45.81 L579.38,45.67 L579.64,45.28 L579.34,44.17 L579.90,43.80 L580.80,44.50 L581.26,44.41 L581.83,43.42 L582.49,43.55 L582.63,44.68 L583.02,44.94 L584.13,44.64 L584.50,45.20 L583.80,46.10 L583.89,46.56 Z M580.3,46.8 a1.2,1.2 0 1,0 2.4,0 a1.2,1.2 0 1,0 -2.4,0 Z" fill="#d8d8d8"/><path d="M586,49.5 l2,0 l-1,1.4 z" fill="#ccc"/><rect x="357.5" y="43" width="1" height="534.5" fill="#1f1f1f"/><rect x="395.5" y="43" width="1" height="534.5" fill="#1f1f1f"/><rect x="433.5" y="43" width="1" height="534.5" fill="#1f1f1f"/><rect x="471.5" y="43" width="1" height="534.5" fill="#1f1f1f"/><rect x="509.5" y="43" width="1" height="534.5" fill="#1f1f1f"/><rect x="320" y="80.5" width="228" height="1" fill="#1f1f1f"/><rect x="320" y="118.5" width="228" height="1" fill="#1f1f1f"/><rect x="320" y="156.5" width="228" height="1" fill="#1f1f1f"/><rect x="320" y="194.5" width="228" height="1" fill="#1f1f1f"/><rect x="320" y="232.5" width="228" height="1" fill="#1f1f1f"/><rect x="320" y="270.5" width="228" height="1" fill="#1f1f1f"/><rect x="320" y="308.5" width="228" height="1" fill="#1f1f1f"/><rect x="320" y="346.5" width="228" height="1" fill="#1f1f1f"/><rect x="320" y="384.5" width="228" height="1" fill="#1f1f1f"/><rect x="320" y="422.5" width="228" height="1" fill="#1f1f1f"/><rect x="320" y="460.5" width="228" height="1" fill="#1f1f1f"/><rect x="320" y="498.5" width="228" height="1" fill="#1f1f1f"/><rect x="320" y="536.5" width="228" height="1" fill="#1f1f1f"/><rect x="320" y="574.5" width="228" height="1" fill="#1f1f1f"/><path d="M590,583 l6,-6 M592.5,584 l4,-4" stroke="#888" stroke-width="0.8"/></svg>
<svg style="left:0;top:0" width="600" height="584"><defs><clipPath id="gc"><rect x="320" y="43" width="228" height="534.5"/></clipPath></defs><g clip-path="url(#gc)"><g transform="translate(320,43)"><path d="M2.2,18.4 H31 V20.4 H2.2 Z" fill="#fff"/><path d="M35.8,19.4 L25,14.4 L28.4,19.4 L25,24.4 Z" fill="#fff"/></g><g transform="translate(358,43)"><path d="M1,16.600 H25.800 L17.600,7.200 H24 L36.200,19.200 L24,31.400 H17.600 L25.800,21.600 H1 Z" fill="#fff"/></g><g transform="translate(396,43)"><path d="M1,13 H19 V7 L36.200,19.200 L19,31.600 V24.800 H1 Z" fill="#fff"/></g><g transform="translate(434,43)"><path d="M1.500,9.400 C10,12.600 27,12.600 35.700,9.400 C34.200,15 34.200,23 35.700,28.700 C27,25 10,25 1.500,28.700 C3,23 3,15 1.500,9.400 Z" fill="#fff"/></g><g transform="translate(472,43)"><path d="M3.400,3.600 C10,2.400 28,4.600 34.600,3 C35.800,10 33.800,26 35,34 C26,35.600 10,33.200 3.200,34.800 C1.800,26 4.400,12 3.400,3.600 Z" fill="none" stroke="#fff" stroke-width="1.800" stroke-linejoin="round"/></g><g transform="translate(510,43)"><path d="M12.400,7.600 L33.600,3.400 V27.600 H32 V9 L13.900,12.600 V31 H12.400 Z" fill="#fff"/><ellipse cx="9" cy="31.400" rx="5" ry="3.500" transform="rotate(-22 9 31.4)" fill="#fff"/><ellipse cx="28.600" cy="28.200" rx="5" ry="3.500" transform="rotate(-22 28.6 28.2)" fill="#fff"/></g><g transform="translate(320,81)"><polygon points="10.4,4.2 13.7,2.3 15.3,15.3 20.8,12.4 22.4,24.4 26,21.5 26.7,36.1 23.7,26 19.8,27.7 18.2,17.2 13,20.5" fill="#fff"/></g><g transform="translate(358,81)"><path transform="rotate(0.00 18.9 19)" d="M18.9,17 Q22.51,9.4 18.9,1.8000000000000007 Q15.29,9.4 18.9,17 Z" fill="#fff"/><path transform="rotate(30.00 18.9 19)" d="M18.9,17 Q22.51,9.4 18.9,1.8000000000000007 Q15.29,9.4 18.9,17 Z" fill="#fff"/><path transform="rotate(60.00 18.9 19)" d="M18.9,17 Q22.51,9.4 18.9,1.8000000000000007 Q15.29,9.4 18.9,17 Z" fill="#fff"/><path transform="rotate(90.00 18.9 19)" d="M18.9,17 Q22.51,9.4 18.9,1.8000000000000007 Q15.29,9.4 18.9,17 Z" fill="#fff"/><path transform="rotate(120.00 18.9 19)" d="M18.9,17 Q22.51,9.4 18.9,1.8000000000000007 Q15.29,9.4 18.9,17 Z" fill="#fff"/><path transform="rotate(150.00 18.9 19)" d="M18.9,17 Q22.51,9.4 18.9,1.8000000000000007 Q15.29,9.4 18.9,17 Z" fill="#fff"/><path transform="rotate(180.00 18.9 19)" d="M18.9,17 Q22.51,9.4 18.9,1.8000000000000007 Q15.29,9.4 18.9,17 Z" fill="#fff"/><path transform="rotate(210.00 18.9 19)" d="M18.9,17 Q22.51,9.4 18.9,1.8000000000000007 Q15.29,9.4 18.9,17 Z" fill="#fff"/><path transform="rotate(240.00 18.9 19)" d="M18.9,17 Q22.51,9.4 18.9,1.8000000000000007 Q15.29,9.4 18.9,17 Z" fill="#fff"/><path transform="rotate(270.00 18.9 19)" d="M18.9,17 Q22.51,9.4 18.9,1.8000000000000007 Q15.29,9.4 18.9,17 Z" fill="#fff"/><path transform="rotate(300.00 18.9 19)" d="M18.9,17 Q22.51,9.4 18.9,1.8000000000000007 Q15.29,9.4 18.9,17 Z" fill="#fff"/><path transform="rotate(330.00 18.9 19)" d="M18.9,17 Q22.51,9.4 18.9,1.8000000000000007 Q15.29,9.4 18.9,17 Z" fill="#fff"/><circle cx="18.900" cy="19" r="6.600" fill="#fff"/></g><g transform="translate(396,81)"><path d="M8.1,15.6 Q12.97,22.34 15.9,35.1 Q17.43,20.56 8.1,15.6 Z" fill="#fff"/><path d="M10.7,8.1 Q14.10,15.04 16.6,23.4 Q18.20,13.46 10.7,8.1 Z" fill="#fff"/><path d="M16.9,2.6 Q20.81,16.46 18.9,32.5 Q26.99,16.04 16.9,2.6 Z" fill="#fff"/><path d="M30.3,4.6 Q21.52,8.59 23.1,20.2 Q25.88,10.61 30.3,4.6 Z" fill="#fff"/><path d="M27.3,20.2 Q20.84,22.95 23.1,31.2 Q24.76,24.45 27.3,20.2 Z" fill="#fff"/><path d="M28.6,25.7 Q24.19,27.45 25.4,32.2 Q27.41,29.05 28.6,25.7 Z" fill="#fff"/></g><g transform="translate(434,81)"><path d="M19,2.900 C12.600,2.900 9,7.600 9,12.600 C9,17.600 13.600,20 14.600,24.400 H23.400 C24.400,20 29,17.600 29,12.600 C29,7.600 25.400,2.900 19,2.900 Z" fill="none" stroke="#fff" stroke-width="1.200"/><path d="M14.800,26.400 H23.200 M14.800,28.600 H23.200 M15.200,30.800 H22.800" stroke="#fff" stroke-width="1.300"/><path d="M16.400,32.400 H21.600 L20.400,35 H17.600 Z" fill="#fff"/><path d="M18,24 L17,17.400 C14.600,16.600 14.600,13.600 16.600,13.600 C18.200,13.600 18.600,15.600 19,17 C19.400,15.600 19.800,13.600 21.400,13.600 C23.400,13.600 23.400,16.600 21,17.400 L20,24" fill="none" stroke="#fff" stroke-width="0.800"/></g><g transform="translate(472,81)"><g transform="translate(1.6,0.9) rotate(-27 19 19)"><ellipse cx="19" cy="5.200" rx="7" ry="3.400" fill="#fff"/><path d="M14.600,6.600 H23.400 L22,17.600 C24,18.200 26.600,19.400 26.600,21.200 C26.600,23.200 23,24.200 19,24.200 C15,24.200 11.400,23.200 11.400,21.200 C11.400,19.400 14,18.200 16,17.600 Z" fill="#fff"/><path d="M18.200,24 H19.800 L19.200,36.800 Z" fill="#fff"/><path d="M13.600,8.200 C16,9.400 22,9.400 24.400,8.200" stroke="#000" stroke-width="0.700" fill="none"/></g></g><g transform="translate(510,81)"><rect x="2.300" y="8" width="32.200" height="23.400" fill="none" stroke="#fff" stroke-width="1.700"/><path d="M2.600,8.400 L18.400,22 L34.200,8.400 M2.600,31 L14.200,18.600 M34.200,31 L22.600,18.600" fill="none" stroke="#fff" stroke-width="1.600"/></g><g transform="translate(320,119)"><g fill="none" stroke="#fff" stroke-width="1.700"><ellipse cx="8.4" cy="15" rx="5.700" ry="3.300" transform="rotate(14 8.4 15)"/><ellipse cx="8.400" cy="23" rx="5.700" ry="3.300" transform="rotate(-14 8.4 23)"/></g><path d="M12.600,17.400 L16.600,18 L35.400,12.600 L35,15.600 L17.600,22.400 L14,21 Z" fill="#fff"/><path d="M12.600,20.600 L16.600,20 L35.400,25.400 L35,22.400 L17.600,15.600 L14,17 Z" fill="#fff"/></g><g transform="translate(358,119)"><path d="M5.3,2 q0.98,1.1 1.96,0 q0.98,1.1 1.96,0 q0.98,1.1 1.96,0 q0.98,1.1 1.96,0 q0.98,1.1 1.96,0 q0.98,1.1 1.96,0 q0.98,1.1 1.96,0 q0.98,1.1 1.96,0 q0.98,1.1 1.96,0 q0.98,1.1 1.96,0 q0.98,1.1 1.96,0 q0.98,1.1 1.96,0 q0.98,1.1 1.96,0 q0.98,1.1 1.96,0 q-1.1,1.00 0,2.00 q-1.1,1.00 0,2.00 q-1.1,1.00 0,2.00 q-1.1,1.00 0,2.00 q-1.1,1.00 0,2.00 q-1.1,1.00 0,2.00 q-1.1,1.00 0,2.00 q-1.1,1.00 0,2.00 q-1.1,1.00 0,2.00 q-1.1,1.00 0,2.00 q-1.1,1.00 0,2.00 q-1.1,1.00 0,2.00 q-1.1,1.00 0,2.00 q-1.1,1.00 0,2.00 q-1.1,1.00 0,2.00 q-1.1,1.00 0,2.00 q-1.1,1.00 0,2.00 q-0.98,-1.1 -1.96,0 q-0.98,-1.1 -1.96,0 q-0.98,-1.1 -1.96,0 q-0.98,-1.1 -1.96,0 q-0.98,-1.1 -1.96,0 q-0.98,-1.1 -1.96,0 q-0.98,-1.1 -1.96,0 q-0.98,-1.1 -1.96,0 q-0.98,-1.1 -1.96,0 q-0.98,-1.1 -1.96,0 q-0.98,-1.1 -1.96,0 q-0.98,-1.1 -1.96,0 q-0.98,-1.1 -1.96,0 q-0.98,-1.1 -1.96,0 q1.1,-1.00 0,-2.00 q1.1,-1.00 0,-2.00 q1.1,-1.00 0,-2.00 q1.1,-1.00 0,-2.00 q1.1,-1.00 0,-2.00 q1.1,-1.00 0,-2.00 q1.1,-1.00 0,-2.00 q1.1,-1.00 0,-2.00 q1.1,-1.00 0,-2.00 q1.1,-1.00 0,-2.00 q1.1,-1.00 0,-2.00 q1.1,-1.00 0,-2.00 q1.1,-1.00 0,-2.00 q1.1,-1.00 0,-2.00 q1.1,-1.00 0,-2.00 q1.1,-1.00 0,-2.00 q1.1,-1.00 0,-2.00 Z" fill="none" stroke="#d8d8d8" stroke-width="0.8"/></g><g transform="translate(396,119)"><path d="M18.700,1.900 C21,6 23.600,9 23.400,12.400 C23.200,16 20.800,20 20.300,24.200 L20.100,27 C20,30.600 19.500,33.600 18.700,36.100 C17.900,33.600 17.400,30.600 17.300,27 L17.100,24.200 C16.600,20 14.200,16 14,12.400 C13.800,9 16.400,6 18.700,1.900 Z" fill="#fff"/><path d="M15.20,24.00 C15.33,23.09 14.91,22.28 14.40,20.60 C13.89,18.92 14.05,18.93 13.30,17.70 C12.55,16.47 12.61,16.67 11.60,16.00 C10.59,15.33 10.67,15.41 9.50,15.20 C8.33,14.99 8.37,15.04 7.20,15.20 C6.03,15.36 6.17,15.11 5.10,15.80 C4.03,16.49 3.95,16.60 3.20,17.80 C2.45,19.00 2.51,18.91 2.30,20.30 C2.09,21.69 2.16,21.67 2.40,23.00 C2.64,24.33 2.61,24.29 3.20,25.30 C3.79,26.31 3.77,26.29 4.60,26.80 C5.43,27.31 5.39,27.25 6.30,27.20 C7.21,27.15 7.31,27.11 8.00,26.60 C8.69,26.09 9.01,25.78 8.90,25.30 C8.79,24.82 8.11,25.15 7.60,24.80 C7.09,24.45 7.37,24.53 7.00,24.00 C6.63,23.47 6.39,23.47 6.20,22.80 C6.01,22.13 5.98,22.19 6.30,21.50 C6.62,20.81 6.71,20.71 7.40,20.20 C8.09,19.69 8.05,19.71 8.90,19.60 C9.75,19.49 9.77,19.45 10.60,19.80 C11.43,20.15 11.31,20.21 12.00,20.90 C12.69,21.59 12.69,21.57 13.20,22.40 C13.71,23.23 13.37,23.57 13.90,24.00 C14.43,24.43 15.07,24.91 15.20,24.00 Z" fill="#fff"/><path d="M22.20,24.00 C22.07,23.09 22.49,22.28 23.00,20.60 C23.51,18.92 23.35,18.93 24.10,17.70 C24.85,16.47 24.79,16.67 25.80,16.00 C26.81,15.33 26.73,15.41 27.90,15.20 C29.07,14.99 29.03,15.04 30.20,15.20 C31.37,15.36 31.23,15.11 32.30,15.80 C33.37,16.49 33.45,16.60 34.20,17.80 C34.95,19.00 34.89,18.91 35.10,20.30 C35.31,21.69 35.24,21.67 35.00,23.00 C34.76,24.33 34.79,24.29 34.20,25.30 C33.61,26.31 33.63,26.29 32.80,26.80 C31.97,27.31 32.01,27.25 31.10,27.20 C30.19,27.15 30.09,27.11 29.40,26.60 C28.71,26.09 28.39,25.78 28.50,25.30 C28.61,24.82 29.29,25.15 29.80,24.80 C30.31,24.45 30.03,24.53 30.40,24.00 C30.77,23.47 31.01,23.47 31.20,22.80 C31.39,22.13 31.42,22.19 31.10,21.50 C30.78,20.81 30.69,20.71 30.00,20.20 C29.31,19.69 29.35,19.71 28.50,19.60 C27.65,19.49 27.63,19.45 26.80,19.80 C25.97,20.15 26.09,20.21 25.40,20.90 C24.71,21.59 24.71,21.57 24.20,22.40 C23.69,23.23 24.03,23.57 23.50,24.00 C22.97,24.43 22.33,24.91 22.20,24.00 Z" fill="#fff"/><rect x="12" y="24.500" width="13.400" height="1.500" rx="0.600" fill="#fff"/><path d="M17.300,27 C16.400,29 14.600,30.200 12.600,30.800 C10.800,31.200 9.800,30 10.400,28.900" fill="none" stroke="#fff" stroke-width="1.500" stroke-linecap="round"/><path d="M20.100,27 C21,29 22.800,30.200 24.800,30.800 C26.600,31.200 27.600,30 27,28.900" fill="none" stroke="#fff" stroke-width="1.500" stroke-linecap="round"/></g><g transform="translate(434,119)"><path d="M13.30,22.20 C13.51,20.60 13.29,20.52 13.80,19.00 C14.31,17.48 14.29,17.67 15.20,16.50 C16.11,15.33 16.03,15.45 17.20,14.60 C18.37,13.75 18.21,13.83 19.60,13.30 C20.99,12.77 20.88,12.76 22.40,12.60 C23.92,12.44 23.91,12.38 25.30,12.70 C26.69,13.02 26.59,12.97 27.60,13.80 C28.61,14.63 28.35,14.52 29.10,15.80 C29.85,17.08 29.89,17.08 30.40,18.60 C30.91,20.12 30.84,19.71 31.00,21.50 C31.16,23.29 30.33,24.10 31.00,25.30 C31.67,26.50 32.33,26.51 33.50,26.00 C34.67,25.49 35.05,24.41 35.40,23.40 C35.75,22.39 34.59,22.20 34.80,22.20 C35.01,22.20 36.15,22.23 36.20,23.40 C36.25,24.57 36.04,25.24 35.00,26.60 C33.96,27.96 34.22,27.67 32.30,28.50 C30.38,29.33 29.85,28.98 27.80,29.70 C25.75,30.42 26.28,30.51 24.60,31.20 C22.92,31.89 23.05,31.87 21.50,32.30 C19.95,32.73 20.13,32.80 18.80,32.80 C17.47,32.80 17.67,32.89 16.50,32.30 C15.33,31.71 15.25,31.61 14.40,30.60 C13.55,29.59 13.67,29.99 13.30,28.50 C12.93,27.01 13.00,26.68 13.00,25.00 C13.00,23.32 13.09,23.80 13.30,22.20 Z" fill="#fff"/><path d="M13.500,22.400 C11.600,21.600 9.800,19.600 8.600,17 C7.400,14.400 7.200,11.400 8,9 C8.800,6.800 10,5.800 11.600,5.600" fill="none" stroke="#fff" stroke-width="1.900" stroke-linecap="round"/><path d="M11.400,8.600 C11.600,11 10.200,13.400 9.400,15.600 C8.800,17.600 8.600,19 8.400,20.600" fill="none" stroke="#fff" stroke-width="1.300" stroke-linecap="round"/><path d="M8.40,20.60 C7.71,20.12 7.12,20.85 6.00,21.60 C4.88,22.35 5.11,22.33 4.20,23.40 C3.29,24.47 2.81,24.48 2.60,25.60 C2.39,26.72 2.87,26.53 3.40,27.60 C3.93,28.67 3.83,28.35 4.60,29.60 C5.37,30.85 5.71,32.46 6.30,32.30 C6.89,32.14 6.40,30.68 6.80,29.00 C7.20,27.32 7.32,27.49 7.80,26.00 C8.28,24.51 8.44,24.84 8.60,23.40 C8.76,21.96 9.09,21.08 8.40,20.60 Z" fill="#fff"/></g><g transform="translate(472,119)"><path d="M19,10.400 C17.400,5.600 12.600,3.600 9,4.400 C4,5.600 0.800,10 1.200,14.600 C1.800,20.600 8,24 12.600,27 C15.600,29 17.800,31.400 19,33.600 C20.200,31.400 22.400,29 25.400,27 C30,24 36.200,20.600 36.800,14.600 C37.200,10 34,5.600 29,4.400 C25.400,3.600 20.600,5.600 19,10.400 Z" fill="#fff"/></g><g transform="translate(510,119)"><path d="M17.60,7.80 C19.93,6.90 18.27,6.60 20.00,5.40 C21.73,4.20 20.93,4.13 22.80,4.20 C24.67,4.27 24.20,3.73 25.60,5.60 C27.00,7.47 25.13,8.20 27.00,9.80 C28.87,11.40 28.17,9.33 31.20,10.40 C34.23,11.47 34.80,10.83 36.10,13.00 C37.40,15.17 36.80,14.70 35.10,16.90 C33.40,19.10 33.60,18.07 31.00,19.60 C28.40,21.13 27.77,19.13 27.30,21.50 C26.83,23.87 29.17,23.47 29.60,26.70 C30.03,29.93 30.43,28.83 28.60,31.20 C26.77,33.57 27.13,33.57 24.10,33.80 C21.07,34.03 22.10,33.63 19.50,31.90 C16.90,30.17 18.67,29.03 16.30,28.60 C13.93,28.17 15.43,29.07 12.40,30.60 C9.37,32.13 10.47,32.77 7.20,33.20 C3.93,33.63 4.57,33.63 2.60,31.90 C0.63,30.17 0.87,31.27 1.30,28.00 C1.73,24.73 1.50,25.57 3.90,22.10 C6.30,18.63 7.53,20.63 8.50,17.60 C9.47,14.57 6.93,15.83 6.80,13.00 C6.67,10.17 6.03,10.73 8.10,9.10 C10.17,7.47 9.83,8.53 13.00,8.10 C16.17,7.67 15.27,8.70 17.60,7.80 Z" fill="#fff"/></g><g transform="translate(320,157)"><path d="M1.600,23.400 L10.700,17.900 L15.600,26 C19,18 26.400,8 35.800,2 C34.400,6 34.600,10.400 36.100,14 C28,19 21,27 16.600,35.800 C13,30.400 8,26.400 1.600,23.400 Z" fill="#fff"/></g><g transform="translate(358,157)"><circle cx="18.900" cy="19.400" r="11.600" fill="none" stroke="#f0f0f0" stroke-width="1"/><circle cx="18.900" cy="19.400" r="6" fill="#fff"/><path d="M1.300,19.500 H36.200" stroke="#f0f0f0" stroke-width="1"/><path d="M19,2 V36.800" stroke="#d8d8d8" stroke-width="1.400"/><path d="M13,19.500 H25" stroke="#777" stroke-width="0.700"/><path d="M19,13.500 V25.500" stroke="#555" stroke-width="0.800"/></g><g transform="translate(396,157)"><circle cx="18.900" cy="19.400" r="15.100" fill="none" stroke="#fff" stroke-width="4.800"/><path d="M8.600,7.900 L29.200,30.900" stroke="#fff" stroke-width="4"/></g><g transform="translate(434,157)"><ellipse cx="19" cy="16.200" rx="16.900" ry="9.600" fill="#fff"/><path d="M13.600,23 C14.400,26.600 14,29 12.600,31.600 C16.400,30 19.400,27.600 21,24.400 Z" fill="#fff"/></g><g transform="translate(472,157)"><defs><clipPath id="strc"><rect x="1.1" y="1.2" width="35.4" height="36"/></clipPath></defs><g clip-path="url(#strc)" stroke="#fff" stroke-width="1.2"><path d="M-77.70,40 L-37.70,0"/><path d="M-72.30,40 L-32.30,0"/><path d="M-66.90,40 L-26.90,0"/><path d="M-61.50,40 L-21.50,0"/><path d="M-56.10,40 L-16.10,0"/><path d="M-50.70,40 L-10.70,0"/><path d="M-45.30,40 L-5.30,0"/><path d="M-39.90,40 L0.10,0"/><path d="M-34.50,40 L5.50,0"/><path d="M-29.10,40 L10.90,0"/><path d="M-23.70,40 L16.30,0"/><path d="M-18.30,40 L21.70,0"/><path d="M-12.90,40 L27.10,0"/><path d="M-7.50,40 L32.50,0"/><path d="M-2.10,40 L37.90,0"/><path d="M3.30,40 L43.30,0"/><path d="M8.70,40 L48.70,0"/><path d="M14.10,40 L54.10,0"/><path d="M19.50,40 L59.50,0"/><path d="M24.90,40 L64.90,0"/><path d="M30.30,40 L70.30,0"/><path d="M35.70,40 L75.70,0"/><path d="M41.10,40 L81.10,0"/><path d="M46.50,40 L86.50,0"/><path d="M51.90,40 L91.90,0"/><path d="M57.30,40 L97.30,0"/><path d="M62.70,40 L102.70,0"/><path d="M68.10,40 L108.10,0"/><path d="M73.50,40 L113.50,0"/><path d="M78.90,40 L118.90,0"/></g></g><g transform="translate(510,157)"><path d="M7.6,2.0 L13.2,7.6 L7.6,13.2 L2.0,7.6 Z" fill="#fff"/><path d="M7.6,13.000000000000002 L13.2,18.6 L7.6,24.200000000000003 L2.0,18.6 Z" fill="#fff"/><path d="M7.6,24.0 L13.2,29.6 L7.6,35.2 L2.0,29.6 Z" fill="#fff"/><path d="M18.6,2.0 L24.200000000000003,7.6 L18.6,13.2 L13.000000000000002,7.6 Z" fill="#fff"/><path d="M18.6,13.000000000000002 L24.200000000000003,18.6 L18.6,24.200000000000003 L13.000000000000002,18.6 Z" fill="#fff"/><path d="M18.6,24.0 L24.200000000000003,29.6 L18.6,35.2 L13.000000000000002,29.6 Z" fill="#fff"/><path d="M29.6,2.0 L35.2,7.6 L29.6,13.2 L24.0,7.6 Z" fill="#fff"/><path d="M29.6,13.000000000000002 L35.2,18.6 L29.6,24.200000000000003 L24.0,18.6 Z" fill="#fff"/><path d="M29.6,24.0 L35.2,29.6 L29.6,35.2 L24.0,29.6 Z" fill="#fff"/></g><g transform="translate(320,195)"><g fill="none" stroke="#e4e4e4" stroke-width="1"><rect x="1.500" y="2.500" width="34" height="33.5"/><path d="M12.500,2.500 V36 M24.500,2.500 V36 M1.500,13.500 H35.500 M1.500,24.500 H35.500"/></g></g><g transform="translate(358,195)"><polygon points="8.1,4.9 17.2,10.7 19.2,5.5 21.5,10.1 28.6,2.6 27.3,12.7 35.1,9.8 28.6,15.3 35.8,16.3 29.3,20.2 33.8,24.4 27,24.1 30.6,32.5 20.8,27 14,34.8 15.9,25 5.9,29.6 12.4,21.5 2,19.5 11.7,17.2 6.2,13.3 13.3,12.7" fill="#fff"/></g><g transform="translate(396,195)"><path d="M18.500,19.500 C22.600,19.500 24.600,22.600 26.800,25.600 C29.400,29 30.400,32.600 28.600,35 C26.600,37.400 22.600,35.200 18.500,35.200 C14.400,35.200 10.400,37.400 8.400,35 C6.600,32.600 7.600,29 10.200,25.600 C12.400,22.600 14.400,19.500 18.500,19.500 Z" fill="#fff"/><ellipse cx="6.500" cy="18" rx="4.200" ry="6.200" transform="rotate(-20 6.5 18)" fill="#fff"/><ellipse cx="14" cy="8.800" rx="4.200" ry="6.800" transform="rotate(-8 14 8.8)" fill="#fff"/><ellipse cx="24.700" cy="9.100" rx="4.400" ry="6.800" transform="rotate(10 24.7 9.1)" fill="#fff"/><ellipse cx="31.200" cy="20.200" rx="4.200" ry="6.200" transform="rotate(15 31.2 20.2)" fill="#fff"/></g><g transform="translate(434,195)"><circle cx="19" cy="19" r="16.600" fill="none" stroke="#fff" stroke-width="1.300"/></g><g transform="translate(472,195)"><rect x="2" y="2.500" width="33.5" height="33.500" fill="none" stroke="#fff" stroke-width="1.500"/></g><g transform="translate(510,195)"><circle cx="18.400" cy="19" r="16.600" fill="none" stroke="#fff" stroke-width="2"/><text x="18.300" y="28.900" font-family="'Liberation Sans',sans-serif" font-size="27.5" fill="#fff" stroke="#fff" stroke-width="0.800" text-anchor="middle">C</text></g><g transform="translate(320,233)"><circle cx="19" cy="18" r="15.600" fill="none" stroke="#fff" stroke-width="3.400"/><text transform="translate(19.800,26.600) scale(0.86,1)" font-family="'Liberation Sans',sans-serif" font-weight="bold" font-size="23.800" fill="#fff" stroke="#fff" stroke-width="0.500" text-anchor="middle">R</text></g><g transform="translate(358,233)"><text transform="translate(18.200,26.700) scale(1.2,1)" font-family="'Liberation Sans',sans-serif" font-weight="bold" font-size="22" fill="#fff" stroke="#fff" stroke-width="0.400" text-anchor="middle">TM</text></g><g transform="translate(396,233)"><polygon points="18.9,2.6 19.8,5.5 22.8,8.1 20.8,8.5 21.5,10.4 25.4,12.7 22.4,13 24,16 27.3,17.2 24.4,17.9 26,20.8 28,22.1 26.7,22.8 29.3,24.4 26.7,25.4 24.6,27 23.4,29.3 21.5,27 20.2,27.6 20.2,36.1 18.2,36.1 18.2,27.6 17,27.3 14.6,29.3 15.3,26.7 11.7,27.3 9.1,27.3 11,25.4 8.1,24.1 11,22.1 9.8,20.2 12.4,19.5 11,16.6 13.7,15.6 12.4,12.4 15.3,12 14.3,8.5 17.2,7.8 18,5.2" fill="#fff"/></g><g transform="translate(434,233)"><g stroke="#fff" stroke-linecap="round" fill="none"><path d="M3,23.4 Q19,22.6 35,7.4" stroke-width="1.1"/><path d="M4.75,23.27 Q5.27,20.19 7.01,18.32" stroke-width="1.3"/><path d="M4.75,23.27 Q5.87,26.18 7.94,27.68" stroke-width="1.3"/><path d="M6.95,22.98 Q7.39,18.86 9.54,16.23" stroke-width="1.3"/><path d="M6.95,22.98 Q8.66,26.76 11.53,28.59" stroke-width="1.3"/><path d="M9.14,22.56 Q9.37,17.57 11.78,14.25" stroke-width="1.3"/><path d="M9.14,22.56 Q11.47,26.99 15.06,28.97" stroke-width="1.3"/><path d="M11.33,22.01 Q11.27,16.34 13.77,12.42" stroke-width="1.3"/><path d="M11.33,22.01 Q14.26,26.86 18.45,28.88" stroke-width="1.3"/><path d="M13.52,21.32 Q13.11,15.17 15.59,10.77" stroke-width="1.3"/><path d="M13.52,21.32 Q16.99,26.40 21.66,28.33" stroke-width="1.3"/><path d="M15.71,20.49 Q14.93,14.08 17.28,9.34" stroke-width="1.3"/><path d="M15.71,20.49 Q19.64,25.62 24.63,27.37" stroke-width="1.3"/><path d="M17.90,19.53 Q16.78,13.07 18.91,8.14" stroke-width="1.3"/><path d="M17.90,19.53 Q22.15,24.52 27.31,26.04" stroke-width="1.3"/><path d="M20.10,18.44 Q18.68,12.13 20.53,7.17" stroke-width="1.3"/><path d="M20.10,18.44 Q24.52,23.14 29.67,24.39" stroke-width="1.3"/><path d="M22.29,17.20 Q20.65,11.26 22.20,6.44" stroke-width="1.3"/><path d="M22.29,17.20 Q26.72,21.50 31.69,22.45" stroke-width="1.3"/><path d="M24.48,15.84 Q22.73,10.43 23.96,5.93" stroke-width="1.3"/><path d="M24.48,15.84 Q28.74,19.61 33.35,20.29" stroke-width="1.3"/><path d="M26.67,14.34 Q24.93,9.63 25.84,5.61" stroke-width="1.3"/><path d="M26.67,14.34 Q30.57,17.51 34.66,17.93" stroke-width="1.3"/><path d="M28.86,12.70 Q27.26,8.85 27.89,5.48" stroke-width="1.3"/><path d="M28.86,12.70 Q32.20,15.21 35.62,15.43" stroke-width="1.3"/><path d="M31.05,10.93 Q29.74,8.07 30.12,5.51" stroke-width="1.3"/><path d="M31.05,10.93 Q33.64,12.72 36.22,12.79" stroke-width="1.3"/><path d="M33.25,9.02 Q32.38,7.30 32.56,5.74" stroke-width="1.3"/><path d="M33.25,9.02 Q34.87,10.06 36.44,10.05" stroke-width="1.3"/></g></g><g transform="translate(472,233)"><path d="M17.10,4.40 C17.88,1.79 17.11,2.65 19.00,1.90 C20.89,1.15 21.51,0.94 23.40,1.90 C25.29,2.86 23.59,3.78 25.30,5.10 C27.01,6.42 27.21,4.80 29.10,6.30 C30.99,7.80 31.42,7.82 31.60,10.10 C31.78,12.38 31.56,12.13 29.70,13.90 C27.84,15.67 24.62,15.43 25.40,16.00 C26.18,16.57 29.48,14.90 32.30,15.80 C35.12,16.70 34.44,16.90 34.80,19.00 C35.16,21.10 34.64,21.48 33.50,22.80 C32.36,24.12 31.57,22.08 31.00,23.40 C30.43,24.72 32.35,25.31 31.60,27.20 C30.85,29.09 30.96,30.18 28.50,29.70 C26.04,29.22 24.99,25.96 23.40,25.60 C21.81,25.24 23.35,26.70 23.20,28.50 C23.05,30.30 23.14,29.35 22.90,31.60 C22.66,33.85 22.79,34.68 22.40,36.00 C22.01,37.32 22.05,37.32 21.60,36.00 C21.15,34.68 21.29,32.35 20.90,31.60 C20.51,30.85 21.62,32.54 20.30,33.50 C18.98,34.46 18.78,35.16 16.50,34.80 C14.22,34.44 14.80,33.44 12.70,32.30 C10.60,31.16 11.60,32.14 9.50,31.00 C7.40,29.86 6.84,30.39 5.70,28.50 C4.56,26.61 4.56,26.80 5.70,24.70 C6.84,22.60 7.19,22.79 9.50,21.50 C11.81,20.21 14.36,20.76 13.40,20.40 C12.44,20.04 9.57,21.11 6.30,20.30 C3.03,19.49 3.64,19.62 2.50,17.70 C1.36,15.78 1.93,15.40 2.50,13.90 C3.07,12.40 3.26,14.02 4.40,12.70 C5.54,11.38 5.16,11.42 6.30,9.50 C7.44,7.58 6.28,7.44 8.20,6.30 C10.12,5.16 10.24,4.41 12.70,5.70 C15.16,6.99 15.08,10.99 16.40,10.60 C17.72,10.21 16.32,7.01 17.10,4.40 Z" fill="#fff"/></g><g transform="translate(510,233)"><path d="M19.60,13.90 C20.86,13.15 20.34,12.56 22.80,10.10 C25.26,7.64 24.38,7.77 27.80,5.70 C31.22,3.63 31.71,3.20 34.20,3.20 C36.69,3.20 35.74,3.24 36.10,5.70 C36.46,8.16 36.54,8.16 35.40,11.40 C34.26,14.64 34.58,14.22 32.30,16.50 C30.02,18.78 28.19,17.29 27.80,19.00 C27.41,20.71 29.65,19.74 31.00,22.20 C32.35,24.66 32.48,24.17 32.30,27.20 C32.12,30.23 32.11,30.02 30.40,32.30 C28.69,34.58 28.88,34.80 26.60,34.80 C24.32,34.80 24.69,34.58 22.80,32.30 C20.91,30.02 21.38,29.87 20.30,27.20 C19.22,24.53 19.71,24.06 19.20,23.40 C18.69,22.74 18.96,25.00 18.60,25.00 C18.24,25.00 18.51,22.74 18.00,23.40 C17.49,24.06 17.98,24.53 16.90,27.20 C15.82,29.87 16.29,30.02 14.40,32.30 C12.51,34.58 12.88,34.80 10.60,34.80 C8.32,34.80 8.51,34.58 6.80,32.30 C5.09,30.02 5.08,30.23 4.90,27.20 C4.72,24.17 4.85,24.66 6.20,22.20 C7.55,19.74 9.79,20.71 9.40,19.00 C9.01,17.29 7.18,18.78 4.90,16.50 C2.62,14.22 2.94,14.64 1.80,11.40 C0.66,8.16 0.74,8.16 1.10,5.70 C1.46,3.24 0.51,3.20 3.00,3.20 C5.49,3.20 5.98,3.63 9.40,5.70 C12.82,7.77 11.94,7.64 14.40,10.10 C16.86,12.56 16.34,13.15 17.60,13.90 C18.86,14.65 18.00,12.60 18.60,12.60 C19.20,12.60 18.34,14.65 19.60,13.90 Z" fill="#fff"/><path d="M18.600,13.400 L16.400,8.800 M18.600,13.400 L20.800,8.800" stroke="#fff" stroke-width="0.700"/></g><g transform="translate(320,271)"><circle cx="18.9" cy="18.9" r="3.900" fill="#fff"/><circle cx="18.9" cy="18.9" r="5.500" fill="none" stroke="#fff" stroke-width="1.300"/><path transform="translate(18.9 18.9) rotate(0)" d="M0.9,-5.6 C1.4,-8.4 -3.2,-9 -2,-12 C-1,-14.400 -2.2,-16 1.600,-16.900" fill="none" stroke="#fff" stroke-width="2.050" stroke-linecap="round"/><path transform="translate(18.9 18.9) rotate(30)" d="M0.9,-5.6 C1.4,-8.4 -3.2,-9 -2,-12 C-1,-14.400 -2.2,-16 1.600,-16.900" fill="none" stroke="#fff" stroke-width="2.050" stroke-linecap="round"/><path transform="translate(18.9 18.9) rotate(60)" d="M0.9,-5.6 C1.4,-8.4 -3.2,-9 -2,-12 C-1,-14.400 -2.2,-16 1.600,-16.900" fill="none" stroke="#fff" stroke-width="2.050" stroke-linecap="round"/><path transform="translate(18.9 18.9) rotate(90)" d="M0.9,-5.6 C1.4,-8.4 -3.2,-9 -2,-12 C-1,-14.400 -2.2,-16 1.600,-16.900" fill="none" stroke="#fff" stroke-width="2.050" stroke-linecap="round"/><path transform="translate(18.9 18.9) rotate(120)" d="M0.9,-5.6 C1.4,-8.4 -3.2,-9 -2,-12 C-1,-14.400 -2.2,-16 1.600,-16.900" fill="none" stroke="#fff" stroke-width="2.050" stroke-linecap="round"/><path transform="translate(18.9 18.9) rotate(150)" d="M0.9,-5.6 C1.4,-8.4 -3.2,-9 -2,-12 C-1,-14.400 -2.2,-16 1.600,-16.900" fill="none" stroke="#fff" stroke-width="2.050" stroke-linecap="round"/><path transform="translate(18.9 18.9) rotate(180)" d="M0.9,-5.6 C1.4,-8.4 -3.2,-9 -2,-12 C-1,-14.400 -2.2,-16 1.600,-16.900" fill="none" stroke="#fff" stroke-width="2.050" stroke-linecap="round"/><path transform="translate(18.9 18.9) rotate(210)" d="M0.9,-5.6 C1.4,-8.4 -3.2,-9 -2,-12 C-1,-14.400 -2.2,-16 1.600,-16.900" fill="none" stroke="#fff" stroke-width="2.050" stroke-linecap="round"/><path transform="translate(18.9 18.9) rotate(240)" d="M0.9,-5.6 C1.4,-8.4 -3.2,-9 -2,-12 C-1,-14.400 -2.2,-16 1.600,-16.900" fill="none" stroke="#fff" stroke-width="2.050" stroke-linecap="round"/><path transform="translate(18.9 18.9) rotate(270)" d="M0.9,-5.6 C1.4,-8.4 -3.2,-9 -2,-12 C-1,-14.400 -2.2,-16 1.600,-16.900" fill="none" stroke="#fff" stroke-width="2.050" stroke-linecap="round"/><path transform="translate(18.9 18.9) rotate(300)" d="M0.9,-5.6 C1.4,-8.4 -3.2,-9 -2,-12 C-1,-14.400 -2.2,-16 1.600,-16.900" fill="none" stroke="#fff" stroke-width="2.050" stroke-linecap="round"/><path transform="translate(18.9 18.9) rotate(330)" d="M0.9,-5.6 C1.4,-8.4 -3.2,-9 -2,-12 C-1,-14.400 -2.2,-16 1.600,-16.900" fill="none" stroke="#fff" stroke-width="2.050" stroke-linecap="round"/></g><g transform="translate(358,271)"><circle cx="18.7" cy="19" r="5.300" fill="#fff"/><path transform="rotate(0 18.7 19)" d="M16.95,12.2 L18.7,1.8999999999999986 L20.45,12.2 Z" fill="#fff"/><path transform="rotate(45 18.7 19)" d="M16.95,12.2 L18.7,1.8999999999999986 L20.45,12.2 Z" fill="#fff"/><path transform="rotate(90 18.7 19)" d="M16.95,12.2 L18.7,1.8999999999999986 L20.45,12.2 Z" fill="#fff"/><path transform="rotate(135 18.7 19)" d="M16.95,12.2 L18.7,1.8999999999999986 L20.45,12.2 Z" fill="#fff"/><path transform="rotate(180 18.7 19)" d="M16.95,12.2 L18.7,1.8999999999999986 L20.45,12.2 Z" fill="#fff"/><path transform="rotate(225 18.7 19)" d="M16.95,12.2 L18.7,1.8999999999999986 L20.45,12.2 Z" fill="#fff"/><path transform="rotate(270 18.7 19)" d="M16.95,12.2 L18.7,1.8999999999999986 L20.45,12.2 Z" fill="#fff"/><path transform="rotate(315 18.7 19)" d="M16.95,12.2 L18.7,1.8999999999999986 L20.45,12.2 Z" fill="#fff"/></g><g transform="translate(396,271)"><polyline points="1.90,15.01 2.50,14.62 3.10,14.22 3.70,13.86 4.30,13.56 4.90,13.35 5.50,13.26 6.10,13.28 6.70,13.41 7.30,13.65 7.90,13.97 8.50,14.35 9.10,14.75 9.70,15.14 10.30,15.47 10.90,15.74 11.50,15.90 12.10,15.95 12.70,15.88 13.30,15.70 13.90,15.42 14.50,15.07 15.10,14.68 15.70,14.29 16.30,13.92 16.90,13.60 17.50,13.38 18.10,13.26 18.70,13.26 19.30,13.38 19.90,13.60 20.50,13.92 21.10,14.29 21.70,14.68 22.30,15.07 22.90,15.42 23.50,15.70 24.10,15.88 24.70,15.95 25.30,15.90 25.90,15.74 26.50,15.47 27.10,15.14 27.70,14.75 28.30,14.35 28.90,13.97 29.50,13.65 30.10,13.41 30.70,13.28 31.30,13.26 31.90,13.35 32.50,13.56 33.10,13.86 33.70,14.22 34.30,14.62 34.90,15.01 35.50,15.37 36.10,15.66" fill="none" stroke="#fff" stroke-width="1.900" stroke-linecap="round" stroke-linejoin="round"/><polyline points="1.90,18.91 2.50,18.52 3.10,18.12 3.70,17.76 4.30,17.46 4.90,17.25 5.50,17.16 6.10,17.18 6.70,17.31 7.30,17.55 7.90,17.87 8.50,18.25 9.10,18.65 9.70,19.04 10.30,19.37 10.90,19.64 11.50,19.80 12.10,19.85 12.70,19.78 13.30,19.60 13.90,19.32 14.50,18.97 15.10,18.58 15.70,18.19 16.30,17.82 16.90,17.50 17.50,17.28 18.10,17.16 18.70,17.16 19.30,17.28 19.90,17.50 20.50,17.82 21.10,18.19 21.70,18.58 22.30,18.97 22.90,19.32 23.50,19.60 24.10,19.78 24.70,19.85 25.30,19.80 25.90,19.64 26.50,19.37 27.10,19.04 27.70,18.65 28.30,18.25 28.90,17.87 29.50,17.55 30.10,17.31 30.70,17.18 31.30,17.16 31.90,17.25 32.50,17.46 33.10,17.76 33.70,18.12 34.30,18.52 34.90,18.91 35.50,19.27 36.10,19.56" fill="none" stroke="#fff" stroke-width="1.900" stroke-linecap="round" stroke-linejoin="round"/><polyline points="1.90,22.91 2.50,22.52 3.10,22.12 3.70,21.76 4.30,21.46 4.90,21.25 5.50,21.16 6.10,21.18 6.70,21.31 7.30,21.55 7.90,21.87 8.50,22.25 9.10,22.65 9.70,23.04 10.30,23.37 10.90,23.64 11.50,23.80 12.10,23.85 12.70,23.78 13.30,23.60 13.90,23.32 14.50,22.97 15.10,22.58 15.70,22.19 16.30,21.82 16.90,21.50 17.50,21.28 18.10,21.16 18.70,21.16 19.30,21.28 19.90,21.50 20.50,21.82 21.10,22.19 21.70,22.58 22.30,22.97 22.90,23.32 23.50,23.60 24.10,23.78 24.70,23.85 25.30,23.80 25.90,23.64 26.50,23.37 27.10,23.04 27.70,22.65 28.30,22.25 28.90,21.87 29.50,21.55 30.10,21.31 30.70,21.18 31.30,21.16 31.90,21.25 32.50,21.46 33.10,21.76 33.70,22.12 34.30,22.52 34.90,22.91 35.50,23.27 36.10,23.56" fill="none" stroke="#fff" stroke-width="1.900" stroke-linecap="round" stroke-linejoin="round"/></g><g transform="translate(434,271)"><path d="M19,2.300 C21,8 24.600,13 28,18 C33,25.600 28,35.800 19,35.800 C10,35.800 5,25.600 10,18 C13.400,13 17,8 19,2.300 Z" fill="#fff"/></g><g transform="translate(472,271)"><path d="M8,12.400 C8.400,9 12.600,8 14.600,9.600 C16,6.400 21.600,6 23.400,8.600 C25.600,6.800 30,7.800 30.400,10.800 C33.600,10.600 35.600,13.600 34.200,16 C36.800,17.600 36.600,21.600 33.800,22.800 C34.600,26 31,28.200 28.400,26.800 C27,30 22,30.800 20,28.400 C17.600,31 12.600,30.400 11.800,27.200 C8.600,28.200 5.400,25.600 6.400,22.600 C2.800,21.800 1.800,17.800 4.400,16 C3,13.600 5,11.400 8,12.400 Z" fill="#fff"/></g><g transform="translate(510,271)"><path d="M8,12.400 C8.400,9 12.600,8 14.600,9.600 C16,6.400 21.600,6 23.400,8.600 C25.600,6.800 30,7.800 30.400,10.800 C33.600,10.600 35.600,13.600 34.200,16 C36.800,17.600 36.600,21.600 33.800,22.800 C34.600,26 31,28.200 28.400,26.800 C27,30 22,30.800 20,28.400 C17.600,31 12.600,30.400 11.800,27.200 C8.600,28.200 5.400,25.600 6.400,22.600 C2.800,21.800 1.800,17.800 4.400,16 C3,13.600 5,11.400 8,12.400 Z" fill="none" stroke="#e0e0e0" stroke-width="1.05" transform="translate(-0.6,0)"/></g><g transform="translate(320,309)"><polygon points="10.4,4.2 13.7,2.3 15.3,15.3 20.8,12.4 22.4,24.4 26,21.5 26.7,36.1 23.7,26 19.8,27.7 18.2,17.2 13,20.5" fill="#fff"/></g><g transform="translate(358,309)"><path d="M7.200,31.200 C5.600,28 5.800,24.600 6.500,21.500 C7,19.600 8,18.600 8.500,17.600 C9.400,15.600 10,13.600 10.400,11.600 C11.400,13 11.800,14.400 12,15.800 C11.800,13.600 12.400,12.200 13,11 C14,9.400 14.800,8 15.300,6.500 C16,5 16.800,3.800 17.200,2.400 C18,4.400 18.200,5.800 17.900,7.200 C17.600,8.200 17.200,9 17.200,9.800 C17.400,11.600 20,12 21.500,13.700 C22.200,14.600 22.400,15.800 22.400,17 C22.800,15 23.600,13.400 24.400,11.800 C24.800,13.600 25.200,15 26,16.300 C27.400,17.800 29,18.600 29.600,20.200 C30,22 28.800,23.200 28.600,24.700 C28.600,26.600 30,28.400 29.300,30.600 C28.800,32.600 27.600,34 26,35.100 C24,36.200 21.400,36.400 18.900,36.400 C16,36.400 13,36.200 11,35.100 C9.200,34.200 7.800,32.800 7.200,31.200 Z" fill="#fff"/><path d="M11.500,14.600 C10.600,19.400 17.800,18.800 17.400,22.400 C17.200,25.200 13,27 12.200,31" fill="none" stroke="#000" stroke-width="2.100" stroke-linecap="round"/><path d="M22.500,17.600 C22.800,21.200 18.600,23.400 19,26.200 C19.400,28.800 22.400,29.600 22.800,32.200" fill="none" stroke="#000" stroke-width="1.900" stroke-linecap="round"/></g><g transform="translate(396,309)"><g stroke="#fff" stroke-linecap="butt" fill="none"><g transform="rotate(0 18.6 19)"><path d="M18.6,19 V1.8999999999999986" stroke-width="1.700"/><path d="M16.700000000000003,4.6 H20.5 M16.5,8 H20.700000000000003 M16.200000000000003,12.4 L18.6,14 L21.0,12.4" stroke-width="1.200"/></g><g transform="rotate(60 18.6 19)"><path d="M18.6,19 V1.8999999999999986" stroke-width="1.700"/><path d="M16.700000000000003,4.6 H20.5 M16.5,8 H20.700000000000003 M16.200000000000003,12.4 L18.6,14 L21.0,12.4" stroke-width="1.200"/></g><g transform="rotate(120 18.6 19)"><path d="M18.6,19 V1.8999999999999986" stroke-width="1.700"/><path d="M16.700000000000003,4.6 H20.5 M16.5,8 H20.700000000000003 M16.200000000000003,12.4 L18.6,14 L21.0,12.4" stroke-width="1.200"/></g><g transform="rotate(180 18.6 19)"><path d="M18.6,19 V1.8999999999999986" stroke-width="1.700"/><path d="M16.700000000000003,4.6 H20.5 M16.5,8 H20.700000000000003 M16.200000000000003,12.4 L18.6,14 L21.0,12.4" stroke-width="1.200"/></g><g transform="rotate(240 18.6 19)"><path d="M18.6,19 V1.8999999999999986" stroke-width="1.700"/><path d="M16.700000000000003,4.6 H20.5 M16.5,8 H20.700000000000003 M16.200000000000003,12.4 L18.6,14 L21.0,12.4" stroke-width="1.200"/></g><g transform="rotate(300 18.6 19)"><path d="M18.6,19 V1.8999999999999986" stroke-width="1.700"/><path d="M16.700000000000003,4.6 H20.5 M16.5,8 H20.700000000000003 M16.200000000000003,12.4 L18.6,14 L21.0,12.4" stroke-width="1.200"/></g></g><circle cx="18.6" cy="19" r="3.300" fill="#fff"/></g><g transform="translate(434,309)"><polygon points="28.20,19.00 23.55,27.05 14.25,27.05 9.60,19.00 14.25,10.95 23.55,10.95" fill="#fff"/><g transform="rotate(90 18.9 19)" stroke="#fff" fill="none"><path d="M18.9,19 V2.1000000000000014" stroke-width="2.900"/><path d="M14.999999999999998,3.4000000000000004 L18.9,7.6 L22.799999999999997,3.4000000000000004" stroke-width="2.500"/><path d="M16.299999999999997,8.4 L18.9,10.4 L21.5,8.4" stroke-width="1.600"/></g><g transform="rotate(150 18.9 19)" stroke="#fff" fill="none"><path d="M18.9,19 V2.1000000000000014" stroke-width="2.900"/><path d="M14.999999999999998,3.4000000000000004 L18.9,7.6 L22.799999999999997,3.4000000000000004" stroke-width="2.500"/><path d="M16.299999999999997,8.4 L18.9,10.4 L21.5,8.4" stroke-width="1.600"/></g><g transform="rotate(210 18.9 19)" stroke="#fff" fill="none"><path d="M18.9,19 V2.1000000000000014" stroke-width="2.900"/><path d="M14.999999999999998,3.4000000000000004 L18.9,7.6 L22.799999999999997,3.4000000000000004" stroke-width="2.500"/><path d="M16.299999999999997,8.4 L18.9,10.4 L21.5,8.4" stroke-width="1.600"/></g><g transform="rotate(270 18.9 19)" stroke="#fff" fill="none"><path d="M18.9,19 V2.1000000000000014" stroke-width="2.900"/><path d="M14.999999999999998,3.4000000000000004 L18.9,7.6 L22.799999999999997,3.4000000000000004" stroke-width="2.500"/><path d="M16.299999999999997,8.4 L18.9,10.4 L21.5,8.4" stroke-width="1.600"/></g><g transform="rotate(330 18.9 19)" stroke="#fff" fill="none"><path d="M18.9,19 V2.1000000000000014" stroke-width="2.900"/><path d="M14.999999999999998,3.4000000000000004 L18.9,7.6 L22.799999999999997,3.4000000000000004" stroke-width="2.500"/><path d="M16.299999999999997,8.4 L18.9,10.4 L21.5,8.4" stroke-width="1.600"/></g><g transform="rotate(390 18.9 19)" stroke="#fff" fill="none"><path d="M18.9,19 V2.1000000000000014" stroke-width="2.900"/><path d="M14.999999999999998,3.4000000000000004 L18.9,7.6 L22.799999999999997,3.4000000000000004" stroke-width="2.500"/><path d="M16.299999999999997,8.4 L18.9,10.4 L21.5,8.4" stroke-width="1.600"/></g></g><g transform="translate(472,309)"><g stroke="#fff" fill="none" stroke-linecap="butt"><g transform="rotate(90 18.9 19)"><path d="M18.9,19 V2.1000000000000014" stroke-width="3.300"/><path d="M12.999999999999998,5.9 L18.9,10.9 L24.799999999999997,5.9" stroke-width="3"/></g><g transform="rotate(150 18.9 19)"><path d="M18.9,19 V2.1000000000000014" stroke-width="3.300"/><path d="M12.999999999999998,5.9 L18.9,10.9 L24.799999999999997,5.9" stroke-width="3"/></g><g transform="rotate(210 18.9 19)"><path d="M18.9,19 V2.1000000000000014" stroke-width="3.300"/><path d="M12.999999999999998,5.9 L18.9,10.9 L24.799999999999997,5.9" stroke-width="3"/></g><g transform="rotate(270 18.9 19)"><path d="M18.9,19 V2.1000000000000014" stroke-width="3.300"/><path d="M12.999999999999998,5.9 L18.9,10.9 L24.799999999999997,5.9" stroke-width="3"/></g><g transform="rotate(330 18.9 19)"><path d="M18.9,19 V2.1000000000000014" stroke-width="3.300"/><path d="M12.999999999999998,5.9 L18.9,10.9 L24.799999999999997,5.9" stroke-width="3"/></g><g transform="rotate(390 18.9 19)"><path d="M18.9,19 V2.1000000000000014" stroke-width="3.300"/><path d="M12.999999999999998,5.9 L18.9,10.9 L24.799999999999997,5.9" stroke-width="3"/></g></g></g><g transform="translate(510,309)"><path d="M31.900,5.850 A17.400,16.600 0 1,0 31.900,33.150 A15.300,15.300 0 0,1 31.900,5.850 Z" fill="#fff"/><path d="M18.900,6.200 A13.140,13.140 0 0,0 18.900,31.900 A16.940,16.940 0 0,1 18.900,6.200 Z" fill="#000"/></g><g transform="translate(320,347)"><path d="M2.00,21.50 C2.18,17.99 1.55,19.84 2.90,16.90 C4.25,13.96 3.86,14.43 6.50,11.70 C9.14,8.97 8.97,9.45 11.70,7.80 C14.43,6.15 13.26,6.77 15.60,6.20 C17.94,5.63 16.38,6.50 19.50,5.90 C22.62,5.30 22.10,4.71 26.00,4.20 C29.90,3.69 29.47,3.60 32.50,4.20 C35.53,4.80 34.93,4.34 36.10,6.20 C37.27,8.06 36.88,7.37 36.40,10.40 C35.92,13.43 36.24,12.79 34.50,16.30 C32.76,19.81 32.76,18.80 30.60,22.10 C28.44,25.40 29.85,24.36 27.30,27.30 C24.75,30.24 25.40,29.95 22.10,31.90 C18.80,33.85 19.99,33.41 16.30,33.80 C12.61,34.19 13.31,33.98 9.80,33.20 C6.29,32.42 6.85,32.58 4.60,31.20 C2.35,29.82 3.08,31.51 2.30,28.60 C1.52,25.69 1.82,25.01 2.00,21.50 Z" fill="#fff"/><path d="M2.400,29.600 C7,29.400 12.600,27.600 15.800,22.800 C13.600,28 8,30.800 2.400,29.600 Z" fill="#000"/></g><g transform="translate(358,347)"><path transform="rotate(-19.7 19 23.4)" d="M19,24.9 C15.10,18.20 14.58,12.99 19,2.59 C23.42,12.99 22.90,18.20 19,24.9 Z" fill="#fff"/><path transform="rotate(17.3 19 23.4)" d="M19,24.9 C15.10,18.61 14.58,13.82 19,4.23 C23.42,13.82 22.90,18.61 19,24.9 Z" fill="#fff"/><path transform="rotate(62.8 19 23.4)" d="M19,24.9 C15.55,18.59 15.09,13.78 19,4.17 C22.91,13.78 22.45,18.59 19,24.9 Z" fill="#fff"/><path transform="rotate(97.4 19 23.4)" d="M19,24.9 C16.15,20.27 15.77,17.15 19,10.90 C22.23,17.15 21.85,20.27 19,24.9 Z" fill="#fff"/><path transform="rotate(145.1 19 23.4)" d="M19,24.9 C17.35,21.39 17.13,19.38 19,15.36 C20.87,19.38 20.65,21.39 19,24.9 Z" fill="#fff"/><path transform="rotate(-115.6 19 23.4)" d="M19,24.9 C15.70,19.35 15.26,15.30 19,7.21 C22.74,15.30 22.30,19.35 19,24.9 Z" fill="#fff"/><path transform="rotate(-62.8 19 23.4)" d="M19,24.9 C15.55,18.59 15.09,13.78 19,4.17 C22.91,13.78 22.45,18.59 19,24.9 Z" fill="#fff"/><circle cx="19" cy="22.4" r="3.2" fill="#fff"/><path d="M19.6,23 C22,26.6 25,30.600 28.500,35" stroke="#ddd" stroke-width="0.8" fill="none"/></g><g transform="translate(396,347)"><path d="M18.400,2.300 C22,7 26,12 25.700,18 C25.400,24 22,28.600 18.400,31.400 L17.400,36 L16.200,36 L17.200,31.400 C12.600,28 10.600,23 11,17.600 C11.400,11.600 15.600,7 18.400,2.300 Z" fill="#fff"/></g><g transform="translate(434,347)"><path d="M19,2.300 C22,5.600 25.400,9 25.700,13 C25.800,14.400 25.400,15.400 24.800,16.200 C28.600,14.800 33,16.600 35.700,19 C33,23 28,26.800 23,26.600 C21,26.600 19.600,26.400 18.400,26 L17,36 L15.600,36 L17,26 C15.600,26.400 14.600,26.600 13,26.600 C8,26.800 4.600,23 2.300,19 C5,16.600 9.400,14.800 13.200,16.200 C12.600,15.400 12.200,14.400 12.300,13 C12.600,9 16,5.600 19,2.300 Z" fill="#fff"/></g><g transform="translate(472,347)"><polygon points="18.60,1.90 20.80,7.00 23.80,5.80 22.60,12.80 27.60,9.00 28.50,12.00 31.40,11.40 30.40,14.80 35.20,15.20 31.60,18.60 33.80,20.20 27.60,24.00 29.00,27.80 20.00,26.60 19.30,28.50 18.60,36.00 17.20,36.00 17.90,28.50 17.20,26.60 8.20,27.80 9.60,24.00 3.40,20.20 5.60,18.60 2.00,15.20 6.80,14.80 5.80,11.40 8.70,12.00 9.60,9.00 14.60,12.80 13.40,5.80 16.40,7.00" fill="#fff"/></g><g transform="translate(510,347)"><path d="M18.400,1.900 C19.400,4.400 21.400,6 24.200,6.600 C22.600,8.600 23,10.600 25,12.400 L26.800,13 C25,14.600 25.200,17 27.600,18.600 C25,20 24.600,22 25.600,24 C22.600,24 21,25.600 19.600,27.600 L17.600,36 L16.200,36 L18.200,27.600 C16.600,25.600 14.600,24.400 11.600,24.600 C12.600,22.400 12,20.400 9.600,19 C11.800,17.400 12,15 10,13.400 C12.600,12.400 13.400,10 12.600,7.600 C15.400,7 17.400,4.800 18.400,1.900 Z" fill="#fff"/></g><g transform="translate(320,385)"><polygon points="18.7,2.8 20.3,7.6 24.7,10.8 24,15 30.1,16.2 28.5,20.3 26,22.2 27.2,25.3 20.3,26 19.4,27.2 17.7,26.3 10.8,26 12,22.5 9.1,20.9 7,16.5 13.3,15 12.4,11.1 17.1,7.6" fill="#fff"/><path d="M19.200,25.600 C19,29.600 18,33 16.400,36" fill="none" stroke="#fff" stroke-width="1.500"/></g><g transform="translate(358,385)"><path transform="rotate(-32.1 18.6 19.6)" d="M18.6,20.6 C12.60,12.75 13.60,5.90 18.6,2.48 C23.60,5.90 24.60,12.75 18.6,20.6 Z" fill="#fff"/><path transform="rotate(29.2 18.6 19.6)" d="M18.6,20.6 C12.60,14.10 13.60,8.61 18.6,5.86 C23.60,8.61 24.60,14.10 18.6,20.6 Z" fill="#fff"/><path transform="rotate(88.0 18.6 19.6)" d="M18.6,20.6 C12.60,12.88 13.60,6.15 18.6,2.79 C23.60,6.15 24.60,12.88 18.6,20.6 Z" fill="#fff"/><path transform="rotate(144.4 18.6 19.6)" d="M18.6,20.6 C12.60,13.69 13.60,7.79 18.6,4.84 C23.60,7.79 24.60,13.69 18.6,20.6 Z" fill="#fff"/><path transform="rotate(-158.0 18.6 19.6)" d="M18.6,20.6 C12.60,13.30 13.60,7.00 18.6,3.85 C23.60,7.00 24.60,13.30 18.6,20.6 Z" fill="#fff"/><path transform="rotate(-103.1 18.6 19.6)" d="M18.6,20.6 C12.60,12.91 13.60,6.21 18.6,2.86 C23.60,6.21 24.60,12.91 18.6,20.6 Z" fill="#fff"/><circle cx="18.6" cy="19.6" r="1.700" fill="#000"/><circle cx="18.6" cy="19.6" r="0.500" fill="#ccc"/></g><g transform="translate(396,385)"><path transform="rotate(10.00 23.2 11.6)" d="M23.2,10.6 Q26.43,6.6 23.2,2.5999999999999996 Q19.97,6.6 23.2,10.6 Z" fill="#fff"/><path transform="rotate(42.73 23.2 11.6)" d="M23.2,10.6 Q26.43,6.6 23.2,2.5999999999999996 Q19.97,6.6 23.2,10.6 Z" fill="#fff"/><path transform="rotate(75.45 23.2 11.6)" d="M23.2,10.6 Q26.43,6.6 23.2,2.5999999999999996 Q19.97,6.6 23.2,10.6 Z" fill="#fff"/><path transform="rotate(108.18 23.2 11.6)" d="M23.2,10.6 Q26.43,6.6 23.2,2.5999999999999996 Q19.97,6.6 23.2,10.6 Z" fill="#fff"/><path transform="rotate(140.91 23.2 11.6)" d="M23.2,10.6 Q26.43,6.6 23.2,2.5999999999999996 Q19.97,6.6 23.2,10.6 Z" fill="#fff"/><path transform="rotate(173.64 23.2 11.6)" d="M23.2,10.6 Q26.43,6.6 23.2,2.5999999999999996 Q19.97,6.6 23.2,10.6 Z" fill="#fff"/><path transform="rotate(206.36 23.2 11.6)" d="M23.2,10.6 Q26.43,6.6 23.2,2.5999999999999996 Q19.97,6.6 23.2,10.6 Z" fill="#fff"/><path transform="rotate(239.09 23.2 11.6)" d="M23.2,10.6 Q26.43,6.6 23.2,2.5999999999999996 Q19.97,6.6 23.2,10.6 Z" fill="#fff"/><path transform="rotate(271.82 23.2 11.6)" d="M23.2,10.6 Q26.43,6.6 23.2,2.5999999999999996 Q19.97,6.6 23.2,10.6 Z" fill="#fff"/><path transform="rotate(304.55 23.2 11.6)" d="M23.2,10.6 Q26.43,6.6 23.2,2.5999999999999996 Q19.97,6.6 23.2,10.6 Z" fill="#fff"/><path transform="rotate(337.27 23.2 11.6)" d="M23.2,10.6 Q26.43,6.6 23.2,2.5999999999999996 Q19.97,6.6 23.2,10.6 Z" fill="#fff"/><circle cx="23.200" cy="11.600" r="5.200" fill="#fff"/><path d="M20,15.600 C15,18 12.600,22 13.300,27.600 M13.600,24.600 C18,25 24,27 29,29.600" fill="none" stroke="#fff" stroke-width="1.400"/><path transform="rotate(-81.2 14 20.4)" d="M14,20.4 C10.50,16.88 11.50,12.18 14,8.66 C16.50,12.18 17.50,16.88 14,20.4 Z" fill="#fff"/><path transform="rotate(-59.7 12.8 27.8)" d="M12.8,27.8 C10.00,25.30 10.80,21.97 12.8,19.46 C14.80,21.97 15.60,25.30 12.8,27.8 Z" fill="#fff"/><path transform="rotate(128.2 13.4 28)" d="M13.4,28 C10.60,25.86 11.40,23.01 13.4,20.88 C15.40,23.01 16.20,25.86 13.4,28 Z" fill="#fff"/><path transform="rotate(72.5 20 26)" d="M20,26 C17.34,23.61 18.10,20.42 20,18.03 C21.90,20.42 22.66,23.61 20,26 Z" fill="#fff"/><path transform="rotate(81.7 26 28)" d="M26,28 C22.92,25.09 23.80,21.21 26,18.30 C28.20,21.21 29.08,25.09 26,28 Z" fill="#fff"/><path transform="rotate(129.1 26.6 29)" d="M26.6,29 C23.80,26.53 24.60,23.23 26.6,20.75 C28.60,23.23 29.40,26.53 26.6,29 Z" fill="#fff"/></g><g transform="translate(434,385)"><path transform="rotate(0.00 29.4 12.8)" d="M29.4,11.8 Q32.82,7.800000000000001 29.4,3.8000000000000007 Q25.98,7.800000000000001 29.4,11.8 Z" fill="#fff"/><path transform="rotate(32.73 29.4 12.8)" d="M29.4,11.8 Q32.82,7.800000000000001 29.4,3.8000000000000007 Q25.98,7.800000000000001 29.4,11.8 Z" fill="#fff"/><path transform="rotate(65.45 29.4 12.8)" d="M29.4,11.8 Q32.82,7.800000000000001 29.4,3.8000000000000007 Q25.98,7.800000000000001 29.4,11.8 Z" fill="#fff"/><path transform="rotate(98.18 29.4 12.8)" d="M29.4,11.8 Q32.82,7.800000000000001 29.4,3.8000000000000007 Q25.98,7.800000000000001 29.4,11.8 Z" fill="#fff"/><path transform="rotate(130.91 29.4 12.8)" d="M29.4,11.8 Q32.82,7.800000000000001 29.4,3.8000000000000007 Q25.98,7.800000000000001 29.4,11.8 Z" fill="#fff"/><path transform="rotate(163.64 29.4 12.8)" d="M29.4,11.8 Q32.82,7.800000000000001 29.4,3.8000000000000007 Q25.98,7.800000000000001 29.4,11.8 Z" fill="#fff"/><path transform="rotate(196.36 29.4 12.8)" d="M29.4,11.8 Q32.82,7.800000000000001 29.4,3.8000000000000007 Q25.98,7.800000000000001 29.4,11.8 Z" fill="#fff"/><path transform="rotate(229.09 29.4 12.8)" d="M29.4,11.8 Q32.82,7.800000000000001 29.4,3.8000000000000007 Q25.98,7.800000000000001 29.4,11.8 Z" fill="#fff"/><path transform="rotate(261.82 29.4 12.8)" d="M29.4,11.8 Q32.82,7.800000000000001 29.4,3.8000000000000007 Q25.98,7.800000000000001 29.4,11.8 Z" fill="#fff"/><path transform="rotate(294.55 29.4 12.8)" d="M29.4,11.8 Q32.82,7.800000000000001 29.4,3.8000000000000007 Q25.98,7.800000000000001 29.4,11.8 Z" fill="#fff"/><path transform="rotate(327.27 29.4 12.8)" d="M29.4,11.8 Q32.82,7.800000000000001 29.4,3.8000000000000007 Q25.98,7.800000000000001 29.4,11.8 Z" fill="#fff"/><circle cx="29.400" cy="12.800" r="5.400" fill="#fff"/><ellipse cx="28" cy="17" rx="4" ry="4.600" fill="#fff"/><path d="M24.600,17.600 C20,19.600 17.600,23 18,28 C18.200,30 19.600,31.600 21.600,32 M18.600,22.600 C14,21.600 10.400,19.600 7.600,16" fill="none" stroke="#fff" stroke-width="1.400"/><path transform="rotate(-44.1 8.6 16.4)" d="M8.6,16.4 C5.66,13.73 6.50,10.16 8.6,7.49 C10.70,10.16 11.54,13.73 8.6,16.4 Z" fill="#fff"/><path transform="rotate(16.1 11 18.6)" d="M11,18.6 C8.06,15.79 8.90,12.04 11,9.23 C13.10,12.04 13.94,15.79 11,18.6 Z" fill="#fff"/><path transform="rotate(-105.1 13 21.6)" d="M13,21.6 C9.92,19.30 10.80,16.23 13,13.93 C15.20,16.23 16.08,19.30 13,21.6 Z" fill="#fff"/><path transform="rotate(99.2 18 25.4)" d="M18,25.4 C15.20,23.15 16.00,20.15 18,17.90 C20.00,20.15 20.80,23.15 18,25.4 Z" fill="#fff"/><path transform="rotate(-105.8 19.6 31.8)" d="M19.6,31.8 C16.24,28.50 17.20,24.09 19.6,20.78 C22.00,24.09 22.96,28.50 19.6,31.8 Z" fill="#fff"/><path transform="rotate(56.9 21 32)" d="M21,32 C18.76,30.35 19.40,28.16 21,26.51 C22.60,28.16 23.24,30.35 21,32 Z" fill="#fff"/></g><g transform="translate(472,385)"><path transform="rotate(0 19 19.4)" d="M19,18.9 L12.28,7.02 C10.60,3.92 13.12,1.51 15.64,2.20 C17.32,2.54 18.58,3.23 19,4.26 C19.42,3.23 20.68,2.54 22.36,2.20 C24.88,1.51 27.40,3.92 25.72,7.02 Z" fill="#fff"/><path transform="rotate(72 19 19.4)" d="M19,18.9 L12.28,7.02 C10.60,3.92 13.12,1.51 15.64,2.20 C17.32,2.54 18.58,3.23 19,4.26 C19.42,3.23 20.68,2.54 22.36,2.20 C24.88,1.51 27.40,3.92 25.72,7.02 Z" fill="#fff"/><path transform="rotate(144 19 19.4)" d="M19,18.9 L12.28,7.02 C10.60,3.92 13.12,1.51 15.64,2.20 C17.32,2.54 18.58,3.23 19,4.26 C19.42,3.23 20.68,2.54 22.36,2.20 C24.88,1.51 27.40,3.92 25.72,7.02 Z" fill="#fff"/><path transform="rotate(216 19 19.4)" d="M19,18.9 L12.28,7.02 C10.60,3.92 13.12,1.51 15.64,2.20 C17.32,2.54 18.58,3.23 19,4.26 C19.42,3.23 20.68,2.54 22.36,2.20 C24.88,1.51 27.40,3.92 25.72,7.02 Z" fill="#fff"/><path transform="rotate(288 19 19.4)" d="M19,18.9 L12.28,7.02 C10.60,3.92 13.12,1.51 15.64,2.20 C17.32,2.54 18.58,3.23 19,4.26 C19.42,3.23 20.68,2.54 22.36,2.20 C24.88,1.51 27.40,3.92 25.72,7.02 Z" fill="#fff"/></g><g transform="translate(510,385)"><path transform="rotate(0.00 18.9 19)" d="M18.9,17 Q22.51,9.4 18.9,1.8000000000000007 Q15.29,9.4 18.9,17 Z" fill="#fff"/><path transform="rotate(30.00 18.9 19)" d="M18.9,17 Q22.51,9.4 18.9,1.8000000000000007 Q15.29,9.4 18.9,17 Z" fill="#fff"/><path transform="rotate(60.00 18.9 19)" d="M18.9,17 Q22.51,9.4 18.9,1.8000000000000007 Q15.29,9.4 18.9,17 Z" fill="#fff"/><path transform="rotate(90.00 18.9 19)" d="M18.9,17 Q22.51,9.4 18.9,1.8000000000000007 Q15.29,9.4 18.9,17 Z" fill="#fff"/><path transform="rotate(120.00 18.9 19)" d="M18.9,17 Q22.51,9.4 18.9,1.8000000000000007 Q15.29,9.4 18.9,17 Z" fill="#fff"/><path transform="rotate(150.00 18.9 19)" d="M18.9,17 Q22.51,9.4 18.9,1.8000000000000007 Q15.29,9.4 18.9,17 Z" fill="#fff"/><path transform="rotate(180.00 18.9 19)" d="M18.9,17 Q22.51,9.4 18.9,1.8000000000000007 Q15.29,9.4 18.9,17 Z" fill="#fff"/><path transform="rotate(210.00 18.9 19)" d="M18.9,17 Q22.51,9.4 18.9,1.8000000000000007 Q15.29,9.4 18.9,17 Z" fill="#fff"/><path transform="rotate(240.00 18.9 19)" d="M18.9,17 Q22.51,9.4 18.9,1.8000000000000007 Q15.29,9.4 18.9,17 Z" fill="#fff"/><path transform="rotate(270.00 18.9 19)" d="M18.9,17 Q22.51,9.4 18.9,1.8000000000000007 Q15.29,9.4 18.9,17 Z" fill="#fff"/><path transform="rotate(300.00 18.9 19)" d="M18.9,17 Q22.51,9.4 18.9,1.8000000000000007 Q15.29,9.4 18.9,17 Z" fill="#fff"/><path transform="rotate(330.00 18.9 19)" d="M18.9,17 Q22.51,9.4 18.9,1.8000000000000007 Q15.29,9.4 18.9,17 Z" fill="#fff"/><circle cx="18.900" cy="19" r="6.600" fill="#fff"/></g><g transform="translate(320,423)"><circle cx="18.7" cy="19" r="13" fill="#fff"/><ellipse transform="rotate(0 18.7 19)" cx="18.7" cy="6.4" rx="3.400" ry="4.600" fill="#fff"/><ellipse transform="rotate(30 18.7 19)" cx="18.7" cy="6.4" rx="3.400" ry="4.600" fill="#fff"/><ellipse transform="rotate(60 18.7 19)" cx="18.7" cy="6.4" rx="3.400" ry="4.600" fill="#fff"/><ellipse transform="rotate(90 18.7 19)" cx="18.7" cy="6.4" rx="3.400" ry="4.600" fill="#fff"/><ellipse transform="rotate(120 18.7 19)" cx="18.7" cy="6.4" rx="3.400" ry="4.600" fill="#fff"/><ellipse transform="rotate(150 18.7 19)" cx="18.7" cy="6.4" rx="3.400" ry="4.600" fill="#fff"/><ellipse transform="rotate(180 18.7 19)" cx="18.7" cy="6.4" rx="3.400" ry="4.600" fill="#fff"/><ellipse transform="rotate(210 18.7 19)" cx="18.7" cy="6.4" rx="3.400" ry="4.600" fill="#fff"/><ellipse transform="rotate(240 18.7 19)" cx="18.7" cy="6.4" rx="3.400" ry="4.600" fill="#fff"/><ellipse transform="rotate(270 18.7 19)" cx="18.7" cy="6.4" rx="3.400" ry="4.600" fill="#fff"/><ellipse transform="rotate(300 18.7 19)" cx="18.7" cy="6.4" rx="3.400" ry="4.600" fill="#fff"/><ellipse transform="rotate(330 18.7 19)" cx="18.7" cy="6.4" rx="3.400" ry="4.600" fill="#fff"/></g><g transform="translate(358,423)"><path transform="rotate(0 18.7 19)" d="M18.0,17.4 L16.45,4.199999999999999 A2.25,2.4 0 0,1 20.95,4.199999999999999 L19.4,17.4 Z" fill="#fff"/><path transform="rotate(30 18.7 19)" d="M18.0,17.4 L16.45,4.199999999999999 A2.25,2.4 0 0,1 20.95,4.199999999999999 L19.4,17.4 Z" fill="#fff"/><path transform="rotate(60 18.7 19)" d="M18.0,17.4 L16.45,4.199999999999999 A2.25,2.4 0 0,1 20.95,4.199999999999999 L19.4,17.4 Z" fill="#fff"/><path transform="rotate(90 18.7 19)" d="M18.0,17.4 L16.45,4.199999999999999 A2.25,2.4 0 0,1 20.95,4.199999999999999 L19.4,17.4 Z" fill="#fff"/><path transform="rotate(120 18.7 19)" d="M18.0,17.4 L16.45,4.199999999999999 A2.25,2.4 0 0,1 20.95,4.199999999999999 L19.4,17.4 Z" fill="#fff"/><path transform="rotate(150 18.7 19)" d="M18.0,17.4 L16.45,4.199999999999999 A2.25,2.4 0 0,1 20.95,4.199999999999999 L19.4,17.4 Z" fill="#fff"/><path transform="rotate(180 18.7 19)" d="M18.0,17.4 L16.45,4.199999999999999 A2.25,2.4 0 0,1 20.95,4.199999999999999 L19.4,17.4 Z" fill="#fff"/><path transform="rotate(210 18.7 19)" d="M18.0,17.4 L16.45,4.199999999999999 A2.25,2.4 0 0,1 20.95,4.199999999999999 L19.4,17.4 Z" fill="#fff"/><path transform="rotate(240 18.7 19)" d="M18.0,17.4 L16.45,4.199999999999999 A2.25,2.4 0 0,1 20.95,4.199999999999999 L19.4,17.4 Z" fill="#fff"/><path transform="rotate(270 18.7 19)" d="M18.0,17.4 L16.45,4.199999999999999 A2.25,2.4 0 0,1 20.95,4.199999999999999 L19.4,17.4 Z" fill="#fff"/><path transform="rotate(300 18.7 19)" d="M18.0,17.4 L16.45,4.199999999999999 A2.25,2.4 0 0,1 20.95,4.199999999999999 L19.4,17.4 Z" fill="#fff"/><path transform="rotate(330 18.7 19)" d="M18.0,17.4 L16.45,4.199999999999999 A2.25,2.4 0 0,1 20.95,4.199999999999999 L19.4,17.4 Z" fill="#fff"/><circle cx="18.7" cy="19" r="2.800" fill="#fff"/><circle cx="18.7" cy="19" r="1.100" fill="#000"/><circle cx="18.7" cy="19" r="0.400" fill="#ddd"/></g><g transform="translate(396,423)"><g stroke="#d4d4d4" stroke-width="0.75" stroke-linecap="round"><path d="M17.6,20.3 L16.2,20.6"/><path d="M21.4,10.7 L21.4,12.1"/><path d="M22.1,25.8 L23.5,26.2"/><path d="M12.6,8.8 L11.4,9.6"/><path d="M23.0,21.4 L24.2,22.1"/><path d="M1.8,19.6 L3.2,19.8"/><path d="M7.6,12.7 L9.0,12.9"/><path d="M17.9,17.2 L16.7,17.9"/><path d="M19.1,21.7 L19.1,23.1"/><path d="M23.4,17.4 L24.3,18.5"/><path d="M29.3,23.4 L30.1,24.6"/><path d="M15.0,26.7 L15.5,28.0"/><path d="M32.7,18.2 L31.3,18.3"/><path d="M15.4,8.1 L14.8,9.4"/><path d="M27.0,13.3 L28.4,13.7"/><path d="M26.5,9.3 L27.5,10.3"/><path d="M28.4,10.6 L28.2,12.0"/><path d="M17.2,11.1 L16.3,12.1"/><path d="M5.7,22.2 L7.0,22.7"/><path d="M31.0,11.4 L31.4,12.7"/><path d="M4.5,20.5 L5.5,21.5"/><path d="M21.7,15.2 L21.9,16.6"/><path d="M20.4,27.4 L21.5,28.2"/><path d="M9.0,24.6 L7.6,24.9"/><path d="M30.9,20.8 L31.3,22.2"/><path d="M25.8,12.8 L24.7,13.5"/><path d="M8.0,15.2 L7.7,16.5"/><path d="M20.7,24.5 L19.4,24.9"/><path d="M26.9,23.5 L25.8,24.3"/><path d="M32.6,14.9 L31.8,16.0"/><path d="M26.5,15.8 L25.6,16.8"/><path d="M14.3,20.4 L15.1,21.6"/><path d="M7.1,18.6 L5.9,19.3"/><path d="M10.9,11.5 L11.3,12.8"/><path d="M13.1,27.1 L11.7,27.2"/><path d="M9.1,10.3 L10.5,10.5"/><path d="M11.4,14.7 L10.6,15.9"/><path d="M34.8,19.5 L33.7,20.3"/><path d="M4.8,16.9 L4.6,18.3"/><path d="M26.7,18.6 L28.0,18.8"/><path d="M8.9,19.1 L9.7,20.2"/><path d="M20.2,13.8 L20.7,15.1"/><path d="M9.6,27.3 L8.2,27.5"/><path d="M28.4,19.8 L28.5,21.2"/><path d="M24.9,7.9 L24.7,9.3"/><path d="M16.3,29.8 L15.0,30.1"/><path d="M10.2,18.1 L11.5,18.6"/><path d="M21.7,28.9 L23.0,29.5"/><path d="M4.8,24.3 L6.1,24.8"/><path d="M18.3,12.6 L19.4,13.4"/><path d="M14.5,16.2 L14.3,17.6"/><path d="M6.3,11.0 L7.4,11.8"/><path d="M16.9,24.8 L17.6,26.0"/><path d="M32.6,24.4 L31.5,25.3"/><path d="M29.5,16.5 L28.2,17.0"/><path d="M14.7,24.2 L16.1,24.5"/><path d="M24.3,14.5 L23.6,15.7"/><path d="M20.6,19.1 L21.0,20.5"/><path d="M10.4,28.0 L10.2,29.4"/><path d="M18.9,29.5 L18.6,30.9"/><path d="M22.9,8.3 L21.5,8.5"/><path d="M11.6,22.0 L11.3,23.4"/><path d="M19.3,9.3 L19.6,10.7"/><path d="M26.6,27.6 L27.5,28.7"/><path d="M34.5,22.2 L33.3,23.0"/><path d="M25.3,25.6 L25.6,26.9"/><path d="M13.8,10.6 L15.0,11.4"/><path d="M16.7,13.9 L15.3,14.1"/><path d="M3.3,14.2 L4.6,14.6"/><path d="M29.7,26.9 L28.5,27.7"/></g></g><g transform="translate(434,423)"><path d="M8.1,15.6 Q12.97,22.34 15.9,35.1 Q17.43,20.56 8.1,15.6 Z" fill="#fff"/><path d="M10.7,8.1 Q14.10,15.04 16.6,23.4 Q18.20,13.46 10.7,8.1 Z" fill="#fff"/><path d="M16.9,2.6 Q20.81,16.46 18.9,32.5 Q26.99,16.04 16.9,2.6 Z" fill="#fff"/><path d="M30.3,4.6 Q21.52,8.59 23.1,20.2 Q25.88,10.61 30.3,4.6 Z" fill="#fff"/><path d="M27.3,20.2 Q20.84,22.95 23.1,31.2 Q24.76,24.45 27.3,20.2 Z" fill="#fff"/><path d="M28.6,25.7 Q24.19,27.45 25.4,32.2 Q27.41,29.05 28.6,25.7 Z" fill="#fff"/></g><g transform="translate(472,423)"><path d="M4.60,5.20 C3.80,6.24 3.96,8.65 4.20,13.00 C4.44,17.35 4.54,17.34 5.50,21.50 C6.46,25.66 5.37,24.87 7.80,28.60 C10.23,32.33 13.21,34.62 14.60,35.50 C15.99,36.38 14.28,34.78 13.00,31.90 C11.72,29.02 10.84,28.86 9.80,24.70 C8.76,20.54 9.79,20.46 9.10,16.30 C8.41,12.14 8.40,12.06 7.20,9.10 C6.00,6.14 5.40,4.16 4.60,5.20 Z" fill="#fff"/><path d="M19.20,4.90 C18.27,5.59 15.70,7.20 13.70,10.40 C11.70,13.60 11.97,12.74 11.70,16.90 C11.43,21.06 11.23,21.15 12.70,26.00 C14.17,30.85 16.16,33.87 17.20,35.10 C18.24,36.33 17.45,34.23 16.60,30.60 C15.75,26.97 14.61,25.85 14.00,21.50 C13.39,17.15 13.45,17.95 14.30,14.30 C15.15,10.65 15.89,10.31 17.20,7.80 C18.51,5.29 20.13,4.21 19.20,4.90 Z" fill="#fff"/><path d="M24.70,2.00 C24.17,2.53 25.39,4.43 24.00,7.20 C22.61,9.97 21.55,9.47 19.50,12.40 C17.45,15.33 17.07,14.23 16.30,18.20 C15.53,22.17 16.01,22.69 16.60,27.30 C17.19,31.91 17.73,34.62 18.50,35.50 C19.27,36.38 19.05,33.67 19.50,30.60 C19.95,27.53 18.81,27.47 20.20,24.00 C21.59,20.53 22.97,21.07 24.70,17.60 C26.43,14.13 26.35,14.31 26.70,11.00 C27.05,7.69 26.53,7.60 26.00,5.20 C25.47,2.80 25.23,1.47 24.70,2.00 Z" fill="#fff"/><path d="M33.20,15.30 C32.51,15.65 32.87,17.50 30.60,19.50 C28.33,21.50 27.13,20.53 24.70,22.80 C22.27,25.07 22.70,24.61 21.50,28.00 C20.30,31.39 20.04,34.65 20.20,35.50 C20.36,36.35 20.21,33.04 22.10,31.20 C23.99,29.36 24.87,30.68 27.30,28.60 C29.73,26.52 29.63,26.17 31.20,23.40 C32.77,20.63 32.67,20.36 33.20,18.20 C33.73,16.04 33.89,14.95 33.20,15.30 Z" fill="#fff"/></g><g transform="translate(510,423)"><rect x="1.300" y="14" width="12.500" height="11" fill="#fff"/><path d="M14.600,16 C16.400,15.600 18.600,14.200 21.500,13 C25,12.500 31,13 35.800,13.700 C36.300,14.300 36.100,15 35.400,15.300 C31.600,15.500 28,15.700 25.600,16.100 C27.600,16.700 29.200,17.700 29.600,19.100 C29.800,19.900 29.200,20.500 28.400,20.500 C28.800,21.500 28,22.100 27,21.900 C26.600,22.900 25.600,23.300 24.400,23.300 C21.600,23.500 18.600,22.700 16.400,22.500 L14.600,22.500 Z" fill="#fff"/><path d="M16.600,16.500 C18.600,15.700 20.600,15.100 23,15.300 C21.800,16.300 21.600,17.500 22.600,18.700 C20.400,18.500 18.400,18.600 16.600,18.200 Z" fill="#000"/><path d="M22.600,18.700 C24.600,18.700 26.600,19 28.200,19.800 M22.400,20.600 C24,20.600 25.600,20.900 27,21.500" fill="none" stroke="#000" stroke-width="0.600"/></g><g transform="translate(320,461)"><g transform="translate(37.400,0) scale(-1,1)"><rect x="1.300" y="14" width="12.500" height="11" fill="#fff"/><path d="M14.600,16 C16.400,15.600 18.600,14.200 21.500,13 C25,12.500 31,13 35.800,13.700 C36.300,14.300 36.100,15 35.400,15.300 C31.600,15.500 28,15.700 25.600,16.100 C27.600,16.700 29.200,17.700 29.600,19.100 C29.800,19.900 29.200,20.500 28.400,20.500 C28.800,21.500 28,22.100 27,21.900 C26.600,22.900 25.600,23.300 24.400,23.300 C21.600,23.500 18.600,22.700 16.400,22.500 L14.600,22.500 Z" fill="#fff"/><path d="M16.600,16.500 C18.600,15.700 20.600,15.100 23,15.300 C21.800,16.300 21.600,17.500 22.600,18.700 C20.400,18.500 18.400,18.600 16.600,18.200 Z" fill="#000"/><path d="M22.600,18.700 C24.600,18.700 26.600,19 28.200,19.800 M22.400,20.600 C24,20.600 25.600,20.900 27,21.500" fill="none" stroke="#000" stroke-width="0.600"/></g></g><g transform="translate(358,461)"><g transform="translate(0.100,0)"><path d="M18.700,1.900 C21,6 23.600,9 23.400,12.400 C23.200,16 20.800,20 20.300,24.200 L20.100,27 C20,30.600 19.500,33.600 18.700,36.100 C17.900,33.600 17.400,30.600 17.300,27 L17.100,24.200 C16.600,20 14.200,16 14,12.400 C13.800,9 16.400,6 18.700,1.900 Z" fill="#fff"/><path d="M15.20,24.00 C15.33,23.09 14.91,22.28 14.40,20.60 C13.89,18.92 14.05,18.93 13.30,17.70 C12.55,16.47 12.61,16.67 11.60,16.00 C10.59,15.33 10.67,15.41 9.50,15.20 C8.33,14.99 8.37,15.04 7.20,15.20 C6.03,15.36 6.17,15.11 5.10,15.80 C4.03,16.49 3.95,16.60 3.20,17.80 C2.45,19.00 2.51,18.91 2.30,20.30 C2.09,21.69 2.16,21.67 2.40,23.00 C2.64,24.33 2.61,24.29 3.20,25.30 C3.79,26.31 3.77,26.29 4.60,26.80 C5.43,27.31 5.39,27.25 6.30,27.20 C7.21,27.15 7.31,27.11 8.00,26.60 C8.69,26.09 9.01,25.78 8.90,25.30 C8.79,24.82 8.11,25.15 7.60,24.80 C7.09,24.45 7.37,24.53 7.00,24.00 C6.63,23.47 6.39,23.47 6.20,22.80 C6.01,22.13 5.98,22.19 6.30,21.50 C6.62,20.81 6.71,20.71 7.40,20.20 C8.09,19.69 8.05,19.71 8.90,19.60 C9.75,19.49 9.77,19.45 10.60,19.80 C11.43,20.15 11.31,20.21 12.00,20.90 C12.69,21.59 12.69,21.57 13.20,22.40 C13.71,23.23 13.37,23.57 13.90,24.00 C14.43,24.43 15.07,24.91 15.20,24.00 Z" fill="#fff"/><path d="M22.20,24.00 C22.07,23.09 22.49,22.28 23.00,20.60 C23.51,18.92 23.35,18.93 24.10,17.70 C24.85,16.47 24.79,16.67 25.80,16.00 C26.81,15.33 26.73,15.41 27.90,15.20 C29.07,14.99 29.03,15.04 30.20,15.20 C31.37,15.36 31.23,15.11 32.30,15.80 C33.37,16.49 33.45,16.60 34.20,17.80 C34.95,19.00 34.89,18.91 35.10,20.30 C35.31,21.69 35.24,21.67 35.00,23.00 C34.76,24.33 34.79,24.29 34.20,25.30 C33.61,26.31 33.63,26.29 32.80,26.80 C31.97,27.31 32.01,27.25 31.10,27.20 C30.19,27.15 30.09,27.11 29.40,26.60 C28.71,26.09 28.39,25.78 28.50,25.30 C28.61,24.82 29.29,25.15 29.80,24.80 C30.31,24.45 30.03,24.53 30.40,24.00 C30.77,23.47 31.01,23.47 31.20,22.80 C31.39,22.13 31.42,22.19 31.10,21.50 C30.78,20.81 30.69,20.71 30.00,20.20 C29.31,19.69 29.35,19.71 28.50,19.60 C27.65,19.49 27.63,19.45 26.80,19.80 C25.97,20.15 26.09,20.21 25.40,20.90 C24.71,21.59 24.71,21.57 24.20,22.40 C23.69,23.23 24.03,23.57 23.50,24.00 C22.97,24.43 22.33,24.91 22.20,24.00 Z" fill="#fff"/><rect x="12" y="24.500" width="13.400" height="1.500" rx="0.600" fill="#fff"/><path d="M17.300,27 C16.400,29 14.600,30.200 12.600,30.800 C10.800,31.200 9.800,30 10.400,28.900" fill="none" stroke="#fff" stroke-width="1.500" stroke-linecap="round"/><path d="M20.100,27 C21,29 22.800,30.200 24.800,30.800 C26.600,31.200 27.600,30 27,28.900" fill="none" stroke="#fff" stroke-width="1.500" stroke-linecap="round"/></g></g><g transform="translate(396,461)"><path d="M4.600,21.800 C2.400,22 1.600,19.400 3.400,18.400 C5.600,17.200 7,19.400 5.600,20.400 C8,19.800 10,15.800 15,14.800 C21,13.600 25,19 30,19.200 C32.600,19.200 34.400,18 34.600,16.600 C34.800,15.400 33.400,15.200 33.400,16.200 C32.200,14.600 35.600,13.200 36.200,15.800 C36.800,18.800 33.600,22 29.600,22 C24,22 21,17.400 15.600,17.800 C11,18.200 9,21.400 4.600,21.800 Z" fill="#fff"/></g><g transform="translate(434,461)"><rect x="1.300" y="1.300" width="34.800" height="35.400" fill="#fff"/><rect x="3.300" y="3.300" width="30.800" height="31.400" fill="none" stroke="#000" stroke-width="0.800"/><rect x="5" y="5" width="27.400" height="28" fill="none" stroke="#000" stroke-width="0.600"/><circle cx="18.700" cy="19" r="12.300" fill="none" stroke="#000" stroke-width="1.300"/><circle cx="18.700" cy="19" r="10.400" fill="none" stroke="#000" stroke-width="0.600"/><circle cx="7.6" cy="7.8" r="1.400" fill="#000"/><circle cx="29.8" cy="7.8" r="1.400" fill="#000"/><circle cx="7.6" cy="30.2" r="1.400" fill="#000"/><circle cx="29.8" cy="30.2" r="1.400" fill="#000"/><g transform="rotate(0 18.7 19) translate(18.7 19) scale(1.18) translate(-18.7 -19)" fill="#000"><path d="M18.7,16.6 C16.9,14.4 17.099999999999998,11.6 18.7,9.4 C20.3,11.6 20.5,14.4 18.7,16.6 Z"/><path d="M18.099999999999998,15.6 C15.7,15 14.299999999999999,13.4 14.5,11 C16.099999999999998,11.6 17.3,13 18.099999999999998,15.6 Z"/><path d="M19.3,15.6 C21.7,15 23.1,13.4 22.9,11 C21.3,11.6 20.099999999999998,13 19.3,15.6 Z"/></g><circle transform="rotate(45 18.7 19)" cx="18.7" cy="11" r="0.900" fill="#000"/><path transform="rotate(45 18.7 19)" d="M18.7,17 L18.7,13.4" stroke="#000" stroke-width="1.200"/><g transform="rotate(90 18.7 19) translate(18.7 19) scale(1.18) translate(-18.7 -19)" fill="#000"><path d="M18.7,16.6 C16.9,14.4 17.099999999999998,11.6 18.7,9.4 C20.3,11.6 20.5,14.4 18.7,16.6 Z"/><path d="M18.099999999999998,15.6 C15.7,15 14.299999999999999,13.4 14.5,11 C16.099999999999998,11.6 17.3,13 18.099999999999998,15.6 Z"/><path d="M19.3,15.6 C21.7,15 23.1,13.4 22.9,11 C21.3,11.6 20.099999999999998,13 19.3,15.6 Z"/></g><circle transform="rotate(135 18.7 19)" cx="18.7" cy="11" r="0.900" fill="#000"/><path transform="rotate(135 18.7 19)" d="M18.7,17 L18.7,13.4" stroke="#000" stroke-width="1.200"/><g transform="rotate(180 18.7 19) translate(18.7 19) scale(1.18) translate(-18.7 -19)" fill="#000"><path d="M18.7,16.6 C16.9,14.4 17.099999999999998,11.6 18.7,9.4 C20.3,11.6 20.5,14.4 18.7,16.6 Z"/><path d="M18.099999999999998,15.6 C15.7,15 14.299999999999999,13.4 14.5,11 C16.099999999999998,11.6 17.3,13 18.099999999999998,15.6 Z"/><path d="M19.3,15.6 C21.7,15 23.1,13.4 22.9,11 C21.3,11.6 20.099999999999998,13 19.3,15.6 Z"/></g><circle transform="rotate(225 18.7 19)" cx="18.7" cy="11" r="0.900" fill="#000"/><path transform="rotate(225 18.7 19)" d="M18.7,17 L18.7,13.4" stroke="#000" stroke-width="1.200"/><g transform="rotate(270 18.7 19) translate(18.7 19) scale(1.18) translate(-18.7 -19)" fill="#000"><path d="M18.7,16.6 C16.9,14.4 17.099999999999998,11.6 18.7,9.4 C20.3,11.6 20.5,14.4 18.7,16.6 Z"/><path d="M18.099999999999998,15.6 C15.7,15 14.299999999999999,13.4 14.5,11 C16.099999999999998,11.6 17.3,13 18.099999999999998,15.6 Z"/><path d="M19.3,15.6 C21.7,15 23.1,13.4 22.9,11 C21.3,11.6 20.099999999999998,13 19.3,15.6 Z"/></g><circle transform="rotate(315 18.7 19)" cx="18.7" cy="11" r="0.900" fill="#000"/><path transform="rotate(315 18.7 19)" d="M18.7,17 L18.7,13.4" stroke="#000" stroke-width="1.200"/><circle cx="18.7" cy="19" r="2.200" fill="#fff"/><circle cx="18.7" cy="19" r="0.800" fill="#000"/></g><g transform="translate(472,461)"><rect x="1.500" y="1.500" width="35" height="35" fill="#fff"/><rect x="4" y="4" width="30" height="30" fill="#000"/><rect x="6" y="6" width="26" height="26" fill="none" stroke="#fff" stroke-width="0.900"/><ellipse transform="rotate(0 19 19)" cx="19" cy="13.400" rx="2.300" ry="4" fill="none" stroke="#fff" stroke-width="1.100"/><path transform="rotate(45 19 19)" d="M19,17 C17.400,14 17.600,10 19,6.600 C20.400,10 20.600,14 19,17 Z M17.400,11 L14.600,8.600 M20.600,11 L23.400,8.600" fill="#fff" stroke="#fff" stroke-width="1"/><ellipse transform="rotate(90 19 19)" cx="19" cy="13.400" rx="2.300" ry="4" fill="none" stroke="#fff" stroke-width="1.100"/><path transform="rotate(135 19 19)" d="M19,17 C17.400,14 17.600,10 19,6.600 C20.400,10 20.600,14 19,17 Z M17.400,11 L14.600,8.600 M20.600,11 L23.400,8.600" fill="#fff" stroke="#fff" stroke-width="1"/><ellipse transform="rotate(180 19 19)" cx="19" cy="13.400" rx="2.300" ry="4" fill="none" stroke="#fff" stroke-width="1.100"/><path transform="rotate(225 19 19)" d="M19,17 C17.400,14 17.600,10 19,6.600 C20.400,10 20.600,14 19,17 Z M17.400,11 L14.600,8.600 M20.600,11 L23.400,8.600" fill="#fff" stroke="#fff" stroke-width="1"/><ellipse transform="rotate(270 19 19)" cx="19" cy="13.400" rx="2.300" ry="4" fill="none" stroke="#fff" stroke-width="1.100"/><path transform="rotate(315 19 19)" d="M19,17 C17.400,14 17.600,10 19,6.600 C20.400,10 20.600,14 19,17 Z M17.400,11 L14.600,8.600 M20.600,11 L23.400,8.600" fill="#fff" stroke="#fff" stroke-width="1"/><circle cx="19" cy="19" r="1.700" fill="#fff"/></g><g transform="translate(510,461)"><path d="M18.4,1.9000000000000004 L23.9,7.4 L18.4,12.9 L12.899999999999999,7.4 Z" fill="#fff"/><path d="M7.4,13.5 L12.9,19 L7.4,24.5 L1.9000000000000004,19 Z" fill="#fff"/><path d="M18.4,13.5 L23.9,19 L18.4,24.5 L12.899999999999999,19 Z" fill="#fff"/><path d="M29.4,13.5 L34.9,19 L29.4,24.5 L23.9,19 Z" fill="#fff"/><path d="M18.4,25.1 L23.9,30.6 L18.4,36.1 L12.899999999999999,30.6 Z" fill="#fff"/></g><g transform="translate(320,499)"><path transform="rotate(0.00 19 21)" d="M19,20 Q21.28,15.8 19,11.6 Q16.72,15.8 19,20 Z" fill="#fff"/><path transform="rotate(-38.00 19 21)" d="M19,20 Q21.09,16.6 19,13.2 Q16.91,16.6 19,20 Z" fill="#fff"/><path transform="rotate(38.00 19 21)" d="M19,20 Q21.09,16.6 19,13.2 Q16.91,16.6 19,20 Z" fill="#fff"/><g fill="none" stroke="#fff" stroke-width="1.250" stroke-linecap="round"><path d="M19,23.400 C16,24.600 13.600,23.600 13.400,21.600 C13.200,19.600 15.600,19 16.200,20.600 M13.600,22.600 C11,25.600 7,24.600 6.600,22 C6.400,20 8.600,19.400 9.200,21 M6.800,23 C5,25 2.400,24.600 2,22.600 C1.800,21.400 3,20.800 3.600,21.800 M10.400,19.600 C9.600,17.600 11.600,16.400 12.800,17.600"/><path d="M19,23.400 C22,24.600 24.400,23.600 24.600,21.600 C24.800,19.600 22.400,19 21.800,20.600 M24.400,22.600 C27,25.600 31,24.600 31.400,22 C31.600,20 29.400,19.400 28.800,21 M31.200,23 C33,25 35.600,24.600 36,22.600 C36.200,21.400 35,20.800 34.400,21.800 M27.600,19.600 C28.400,17.600 26.400,16.400 25.200,17.600"/></g></g><g transform="translate(358,499)"><circle transform="rotate(0 18.6 19)" cx="18.6" cy="12.8" r="4.7" fill="none" stroke="#fff" stroke-width="4"/><circle transform="rotate(90 18.6 19)" cx="18.6" cy="12.8" r="4.7" fill="none" stroke="#fff" stroke-width="4"/><circle transform="rotate(180 18.6 19)" cx="18.6" cy="12.8" r="4.7" fill="none" stroke="#fff" stroke-width="4"/><circle transform="rotate(270 18.6 19)" cx="18.6" cy="12.8" r="4.7" fill="none" stroke="#fff" stroke-width="4"/><circle cx="18.6" cy="19" r="5.2" fill="#000"/><circle transform="rotate(0 18.6 19)" cx="18.6" cy="12" r="2" fill="#000"/><rect transform="rotate(0 18.6 19)" x="17.6" y="13" width="2" height="5" fill="#000"/><circle transform="rotate(90 18.6 19)" cx="18.6" cy="12" r="2" fill="#000"/><rect transform="rotate(90 18.6 19)" x="17.6" y="13" width="2" height="5" fill="#000"/><circle transform="rotate(180 18.6 19)" cx="18.6" cy="12" r="2" fill="#000"/><rect transform="rotate(180 18.6 19)" x="17.6" y="13" width="2" height="5" fill="#000"/><circle transform="rotate(270 18.6 19)" cx="18.6" cy="12" r="2" fill="#000"/><rect transform="rotate(270 18.6 19)" x="17.6" y="13" width="2" height="5" fill="#000"/><rect transform="rotate(45 18.6 19)" x="17.1" y="6.6" width="3" height="6.400" rx="1.2" fill="#fff"/><circle transform="rotate(45 18.6 19)" cx="18.6" cy="14.6" r="1.500" fill="#fff"/><circle transform="rotate(45 18.6 19)" cx="18.6" cy="2.6000000000000014" r="1.9" fill="#fff"/><circle transform="rotate(45 18.6 19)" cx="18.6" cy="-2.6000000000000014" r="2.0" fill="#fff"/><rect transform="rotate(135 18.6 19)" x="17.1" y="6.6" width="3" height="6.400" rx="1.2" fill="#fff"/><circle transform="rotate(135 18.6 19)" cx="18.6" cy="14.6" r="1.500" fill="#fff"/><circle transform="rotate(135 18.6 19)" cx="18.6" cy="2.6000000000000014" r="1.9" fill="#fff"/><circle transform="rotate(135 18.6 19)" cx="18.6" cy="-2.6000000000000014" r="2.0" fill="#fff"/><rect transform="rotate(225 18.6 19)" x="17.1" y="6.6" width="3" height="6.400" rx="1.2" fill="#fff"/><circle transform="rotate(225 18.6 19)" cx="18.6" cy="14.6" r="1.500" fill="#fff"/><circle transform="rotate(225 18.6 19)" cx="18.6" cy="2.6000000000000014" r="1.9" fill="#fff"/><circle transform="rotate(225 18.6 19)" cx="18.6" cy="-2.6000000000000014" r="2.0" fill="#fff"/><rect transform="rotate(315 18.6 19)" x="17.1" y="6.6" width="3" height="6.400" rx="1.2" fill="#fff"/><circle transform="rotate(315 18.6 19)" cx="18.6" cy="14.6" r="1.500" fill="#fff"/><circle transform="rotate(315 18.6 19)" cx="18.6" cy="2.6000000000000014" r="1.9" fill="#fff"/><circle transform="rotate(315 18.6 19)" cx="18.6" cy="-2.6000000000000014" r="2.0" fill="#fff"/><circle cx="18.6" cy="19" r="2.300" fill="#fff"/></g><g transform="translate(396,499)"><circle cx="4.400" cy="19" r="2.900" fill="#fff"/><path transform="rotate(0 7 19)" d="M7,19 L29.4,17.0 L30.9,15.6 L34.8,19 L30.9,22.4 L29.4,21.0 Z" fill="#fff"/><path transform="rotate(-21 7 19)" d="M7,19 Q17.7,18.08 28.4,16.099999999999998 L29.799999999999997,20.900000000000002 Q17.7,20.61 7,19 Z" fill="#fff"/><path transform="rotate(21 7 19)" d="M7,19 Q17.7,18.08 28.4,16.099999999999998 L29.799999999999997,20.900000000000002 Q17.7,20.61 7,19 Z" fill="#fff"/><path transform="rotate(-42 7 19)" d="M7,19 Q15.4,18.12 23.8,16.2 L25.2,20.8 Q15.4,20.54 7,19 Z" fill="#fff"/><path transform="rotate(42 7 19)" d="M7,19 Q15.4,18.12 23.8,16.2 L25.2,20.8 Q15.4,20.54 7,19 Z" fill="#fff"/></g><g transform="translate(434,499)"><defs><clipPath id="t3c"><rect x="1.500" y="1.500" width="35" height="35"/></clipPath></defs><g clip-path="url(#t3c)"><g fill="none" stroke="#fff"><path transform="rotate(45 19 19)" d="M19,19 C12.600,13 12.600,1 19,-5.400 C25.400,1 25.400,13 19,19 Z" stroke-width="1.100"/><path transform="rotate(45 19 19)" d="M19,15.600 C15.600,11 15.600,2.600 19,-1.800 C22.400,2.600 22.400,11 19,15.600 Z" stroke-width="0.700"/><path transform="rotate(135 19 19)" d="M19,19 C12.600,13 12.600,1 19,-5.400 C25.400,1 25.400,13 19,19 Z" stroke-width="1.100"/><path transform="rotate(135 19 19)" d="M19,15.600 C15.600,11 15.600,2.600 19,-1.800 C22.400,2.600 22.400,11 19,15.600 Z" stroke-width="0.700"/><path transform="rotate(225 19 19)" d="M19,19 C12.600,13 12.600,1 19,-5.400 C25.400,1 25.400,13 19,19 Z" stroke-width="1.100"/><path transform="rotate(225 19 19)" d="M19,15.600 C15.600,11 15.600,2.600 19,-1.800 C22.400,2.600 22.400,11 19,15.600 Z" stroke-width="0.700"/><path transform="rotate(315 19 19)" d="M19,19 C12.600,13 12.600,1 19,-5.400 C25.400,1 25.400,13 19,19 Z" stroke-width="1.100"/><path transform="rotate(315 19 19)" d="M19,15.600 C15.600,11 15.600,2.600 19,-1.800 C22.400,2.600 22.400,11 19,15.600 Z" stroke-width="0.700"/><path d="M19,2.8999999999999995 L21.7,5.6 L19,8.3 L16.3,5.6 Z" stroke-width="0.800"/><path d="M19,29.7 L21.7,32.4 L19,35.1 L16.3,32.4 Z" stroke-width="0.800"/><path d="M5.6,16.3 L8.3,19 L5.6,21.7 L2.8999999999999995,19 Z" stroke-width="0.800"/><path d="M32.4,16.3 L35.1,19 L32.4,21.7 L29.7,19 Z" stroke-width="0.800"/></g></g></g><g transform="translate(472,499)"><rect x="1.500" y="1.500" width="34.800" height="35" fill="#fff"/><path transform="rotate(-43.3 14 15)" d="M14,15 C9.24,10.63 10.60,4.80 14,0.43 C17.40,4.80 18.76,10.63 14,15 Z" fill="#000"/><path transform="rotate(16.1 13 13)" d="M13,13 C9.36,10.19 10.40,6.44 13,3.63 C15.60,6.44 16.64,10.19 13,13 Z" fill="#000"/><path transform="rotate(-72.0 11 14)" d="M11,14 C7.36,11.67 8.40,8.55 11,6.22 C13.60,8.55 14.64,11.67 11,14 Z" fill="#000"/><path transform="rotate(47.7 22 14.6)" d="M22,14.6 C16.96,10.14 18.40,4.19 22,-0.27 C25.60,4.19 27.04,10.14 22,14.6 Z" fill="#000"/><path transform="rotate(-2.7 24 12)" d="M24,12 C20.64,9.48 21.60,6.11 24,3.59 C26.40,6.11 27.36,9.48 24,12 Z" fill="#000"/><path transform="rotate(83.7 25 13.6)" d="M25,13.6 C21.36,10.88 22.40,7.26 25,4.54 C27.60,7.26 28.64,10.88 25,13.6 Z" fill="#000"/><path d="M12,13 C15,18 17,24 17.600,29 C18,31.600 19.600,33.600 22,34.400 M23,14.600 C20.600,19 18.600,23 17.600,27.600" fill="none" stroke="#000" stroke-width="1.700"/><path d="M13,14 L6,6.400 M22.600,14 L31,6.400" stroke="#fff" stroke-width="0.600" fill="none"/><path transform="rotate(55.1 20 26)" d="M20,26 C15.80,22.12 17.00,16.95 20,13.07 C23.00,16.95 24.20,22.12 20,26 Z" fill="#000"/><path transform="rotate(108.8 21 29)" d="M21,29 C16.24,25.64 17.60,21.16 21,17.81 C24.40,21.16 25.76,25.64 21,29 Z" fill="#000"/><path transform="rotate(113.4 28 24)" d="M28,24 C25.62,22.04 26.30,19.42 28,17.46 C29.70,19.42 30.38,22.04 28,24 Z" fill="#000"/><path transform="rotate(113.4 24 33)" d="M24,33 C22.04,31.04 22.60,28.42 24,26.46 C25.40,28.42 25.96,31.04 24,33 Z" fill="#000"/><g fill="none" stroke="#000" stroke-width="1.500"><circle cx="7.400" cy="22.600" r="2.900"/><circle cx="8" cy="30.600" r="2.700"/><path d="M4,17 C6.600,17.600 8.600,18.600 9.600,20.400 M10.400,25.600 C13,25.600 15,27 15.400,29.600 C15.600,32 14.400,34 12.400,34.600 M4,35 C5.600,34.600 6.600,34 7.400,33.200"/></g><path transform="rotate(126.9 11 20.6)" d="M11,20.6 C8.90,19.10 9.50,17.10 11,15.60 C12.50,17.10 13.10,19.10 11,20.6 Z" fill="#000"/><path transform="rotate(-170.9 4.4 26)" d="M4.4,26 C2.72,24.48 3.20,22.46 4.4,20.94 C5.60,22.46 6.08,24.48 4.4,26 Z" fill="#000"/></g><g transform="translate(510,499)"><path d="M6.600,22.400 C3,22.200 1.800,18 4.200,15 C7,11.600 12,11.800 15.200,15 C18.600,18.400 20.600,21.600 25.600,21.800 C30,22 33,20 33.600,17.200 C33.800,15.800 36,16 36,17.600 C35.800,22.600 30.600,26.400 25,26.200 C18.600,26 15.600,21.600 12.600,18.600 C10.800,16.800 8.800,16.600 7.600,17.600 C6.600,18.600 7,19.800 8,20 C9.600,20.400 9,22.600 6.600,22.400 Z" fill="#fff"/><path d="M14.600,13.600 C19.600,11.600 25.600,13.400 29.600,16.800 C31,18 32,19.400 32.400,20.800 C27.600,21.800 22.600,20.800 19.200,18.200 C17.400,16.800 15.600,15.200 14.600,13.600 Z" fill="#fff"/></g><g transform="translate(320,537)"><path d="M9.600,9 C7,9.600 5.200,7.400 6.200,5.200 C7.600,2.400 13,2.600 17,4 C21.600,4.200 25.600,8 27.600,12.400 C29.600,16.600 28.600,21 25,22.600 C22,24 19.600,23.600 18,23.200 C14.600,24.200 11.400,22.800 9.800,19.400 C8.400,16 9.800,12 12.400,10 C12.400,8 10.800,6.800 9.600,7.200 C8.600,7.600 9.200,8.600 9.600,9 Z" fill="#fff"/><path d="M17.400,9 C18.400,12 19,14.600 19.600,17" stroke="#000" stroke-width="0.900" fill="none"/><path d="M14.400,26 C12,23 5.600,22.600 3,26.600 C1.400,29.600 3,33 6.600,33.800 C11,34.600 14.600,31.600 14.400,26 Z" fill="#fff"/><path d="M24,26 C27,23.400 32.600,23 36,25 C35.600,29 32,32.200 28,31.800 C25,31.400 23.400,28.600 24,26 Z" fill="#fff"/><path d="M14,23 C17.600,25 21,29 23.400,35" fill="none" stroke="#fff" stroke-width="2" stroke-linecap="round"/><path d="M5.600,15 C3,15.400 2,18.600 4,20.600 C5.400,21.800 7,20.800 6.400,19.400" fill="none" stroke="#fff" stroke-width="1.900" stroke-linecap="round"/></g><g transform="translate(358,537)"><circle cx="12.700" cy="12" r="3.900" fill="none" stroke="#fff" stroke-width="2.400"/><path d="M9.800,9.200 L5,4.400 M2.600,8 L7.400,3.200 M5.200,1.400 L7.600,4.600" stroke="#fff" stroke-width="1.800" stroke-linecap="round"/><circle cx="2.800" cy="8" r="1.300" fill="#fff"/><circle cx="7.600" cy="2.800" r="1.300" fill="#fff"/><path d="M15.600,14.800 C19,17 22,19.600 24.400,23 C26.600,26 27.800,30 27.800,35.600" fill="none" stroke="#fff" stroke-width="2"/><circle cx="19.400" cy="18.400" r="2.100" fill="#fff"/><path d="M25.600,24.600 C27,20.600 29,18 31,16.600 M25.600,23 C26,17 27.400,12 29.400,9.400" fill="none" stroke="#fff" stroke-width="1.400"/><path transform="rotate(33.7 27.6 12.6)" d="M27.6,12.6 C23.26,9.36 24.50,5.03 27.6,1.78 C30.70,5.03 31.94,9.36 27.6,12.6 Z" fill="#fff"/><path transform="rotate(66.8 28.6 18.6)" d="M28.6,18.6 C24.82,16.32 25.90,13.27 28.6,10.98 C31.30,13.27 32.38,16.32 28.6,18.6 Z" fill="#fff"/><path transform="rotate(-108.4 24.6 25.4)" d="M24.6,25.4 C18.58,19.33 20.30,11.23 24.6,5.16 C28.90,11.23 30.62,19.33 24.6,25.4 Z" fill="#fff"/></g><g transform="translate(396,537)"><path transform="rotate(0 18.4 19)" d="M18.4,14.4 C14.479999999999999,12 12.399999999999999,5.600000000000001 14.927999999999999,2.8000000000000016 C16.72,1.2000000000000015 20.08,1.2000000000000015 21.872,2.8000000000000016 C24.4,5.600000000000001 22.319999999999997,12 18.4,14.4 Z" fill="#fff"/><path transform="rotate(45 18.4 19)" d="M18.4,14.4 C15.319999999999999,12 13.599999999999998,7 15.671999999999999,4.2 C17.08,2.6 19.72,2.6 21.128,4.2 C23.199999999999996,7 21.479999999999997,12 18.4,14.4 Z" fill="#fff"/><path transform="rotate(90 18.4 19)" d="M18.4,14.4 C14.479999999999999,12 12.399999999999999,5.600000000000001 14.927999999999999,2.8000000000000016 C16.72,1.2000000000000015 20.08,1.2000000000000015 21.872,2.8000000000000016 C24.4,5.600000000000001 22.319999999999997,12 18.4,14.4 Z" fill="#fff"/><path transform="rotate(135 18.4 19)" d="M18.4,14.4 C15.319999999999999,12 13.599999999999998,7 15.671999999999999,4.2 C17.08,2.6 19.72,2.6 21.128,4.2 C23.199999999999996,7 21.479999999999997,12 18.4,14.4 Z" fill="#fff"/><path transform="rotate(180 18.4 19)" d="M18.4,14.4 C14.479999999999999,12 12.399999999999999,5.600000000000001 14.927999999999999,2.8000000000000016 C16.72,1.2000000000000015 20.08,1.2000000000000015 21.872,2.8000000000000016 C24.4,5.600000000000001 22.319999999999997,12 18.4,14.4 Z" fill="#fff"/><path transform="rotate(225 18.4 19)" d="M18.4,14.4 C15.319999999999999,12 13.599999999999998,7 15.671999999999999,4.2 C17.08,2.6 19.72,2.6 21.128,4.2 C23.199999999999996,7 21.479999999999997,12 18.4,14.4 Z" fill="#fff"/><path transform="rotate(270 18.4 19)" d="M18.4,14.4 C14.479999999999999,12 12.399999999999999,5.600000000000001 14.927999999999999,2.8000000000000016 C16.72,1.2000000000000015 20.08,1.2000000000000015 21.872,2.8000000000000016 C24.4,5.600000000000001 22.319999999999997,12 18.4,14.4 Z" fill="#fff"/><path transform="rotate(315 18.4 19)" d="M18.4,14.4 C15.319999999999999,12 13.599999999999998,7 15.671999999999999,4.2 C17.08,2.6 19.72,2.6 21.128,4.2 C23.199999999999996,7 21.479999999999997,12 18.4,14.4 Z" fill="#fff"/><path transform="rotate(0 18.4 19)" d="M18.4,12.6 Q21.25,10.0 18.4,7.4 Q15.55,10.0 18.4,12.6 Z" fill="#000"/><path transform="rotate(22.5 18.4 19)" d="M18.4,14 V6.5" stroke="#000" stroke-width="1.1"/><path transform="rotate(22.5 18.4 19)" d="M18.4,6.5 V2.6000000000000014" stroke="#fff" stroke-width="0.800"/><path transform="rotate(45 18.4 19)" d="M18.4,12.6 Q20.68,10.6 18.4,8.6 Q16.12,10.6 18.4,12.6 Z" fill="#000"/><path transform="rotate(67.5 18.4 19)" d="M18.4,14 V6.5" stroke="#000" stroke-width="1.1"/><path transform="rotate(67.5 18.4 19)" d="M18.4,6.5 V2.6000000000000014" stroke="#fff" stroke-width="0.800"/><path transform="rotate(90 18.4 19)" d="M18.4,12.6 Q21.25,10.0 18.4,7.4 Q15.55,10.0 18.4,12.6 Z" fill="#000"/><path transform="rotate(112.5 18.4 19)" d="M18.4,14 V6.5" stroke="#000" stroke-width="1.1"/><path transform="rotate(112.5 18.4 19)" d="M18.4,6.5 V2.6000000000000014" stroke="#fff" stroke-width="0.800"/><path transform="rotate(135 18.4 19)" d="M18.4,12.6 Q20.68,10.6 18.4,8.6 Q16.12,10.6 18.4,12.6 Z" fill="#000"/><path transform="rotate(157.5 18.4 19)" d="M18.4,14 V6.5" stroke="#000" stroke-width="1.1"/><path transform="rotate(157.5 18.4 19)" d="M18.4,6.5 V2.6000000000000014" stroke="#fff" stroke-width="0.800"/><path transform="rotate(180 18.4 19)" d="M18.4,12.6 Q21.25,10.0 18.4,7.4 Q15.55,10.0 18.4,12.6 Z" fill="#000"/><path transform="rotate(202.5 18.4 19)" d="M18.4,14 V6.5" stroke="#000" stroke-width="1.1"/><path transform="rotate(202.5 18.4 19)" d="M18.4,6.5 V2.6000000000000014" stroke="#fff" stroke-width="0.800"/><path transform="rotate(225 18.4 19)" d="M18.4,12.6 Q20.68,10.6 18.4,8.6 Q16.12,10.6 18.4,12.6 Z" fill="#000"/><path transform="rotate(247.5 18.4 19)" d="M18.4,14 V6.5" stroke="#000" stroke-width="1.1"/><path transform="rotate(247.5 18.4 19)" d="M18.4,6.5 V2.6000000000000014" stroke="#fff" stroke-width="0.800"/><path transform="rotate(270 18.4 19)" d="M18.4,12.6 Q21.25,10.0 18.4,7.4 Q15.55,10.0 18.4,12.6 Z" fill="#000"/><path transform="rotate(292.5 18.4 19)" d="M18.4,14 V6.5" stroke="#000" stroke-width="1.1"/><path transform="rotate(292.5 18.4 19)" d="M18.4,6.5 V2.6000000000000014" stroke="#fff" stroke-width="0.800"/><path transform="rotate(315 18.4 19)" d="M18.4,12.6 Q20.68,10.6 18.4,8.6 Q16.12,10.6 18.4,12.6 Z" fill="#000"/><path transform="rotate(337.5 18.4 19)" d="M18.4,14 V6.5" stroke="#000" stroke-width="1.1"/><path transform="rotate(337.5 18.4 19)" d="M18.4,6.5 V2.6000000000000014" stroke="#fff" stroke-width="0.800"/><circle cx="18.4" cy="19" r="5.800" fill="#000"/><circle cx="18.4" cy="19" r="4.300" fill="#fff"/><circle cx="18.4" cy="19" r="2.800" fill="#000"/><circle cx="18.4" cy="19" r="1.400" fill="#fff"/></g><g transform="translate(434,537)"><path d="M11.600,16 C9.600,12.600 6.600,10.200 3,9.600 C4.400,11.200 5.200,12.600 5.400,14 C4,13.400 2.600,13.600 1.600,14.600 C3.600,15.200 5,16.200 5.800,17.600 C4.400,18 3.400,19 3,20.600 C6.600,21 10.600,20 12.400,17.600 Z" fill="#fff"/><path d="M11.600,16.600 C14.600,15.600 17.600,17 19.600,19.600 C22,23 25,25.600 29,25.400 C32.600,25.200 34.800,22.600 34.400,20 C34.200,18.400 32.600,17.800 31.800,19" fill="none" stroke="#fff" stroke-width="2.300" stroke-linecap="round"/><path d="M21.400,21.600 C21.400,17 23,13.600 26.600,12 C27.800,11.600 28.600,12.600 27.800,13.600" fill="none" stroke="#fff" stroke-width="2.100" stroke-linecap="round"/><path d="M19,21 C16,22 13.200,25 13.600,29.600 C15.600,28 16.800,28 18,28.800 C18,26 19,23.600 21,22.400 Z" fill="#fff"/></g><g transform="translate(472,537)"><g transform="rotate(0 18.4 19)"><circle cx="18.4" cy="6.199999999999999" r="4" fill="#fff"/><path d="M17.5,15 L16.7,9 H20.099999999999998 L19.299999999999997,15 Z" fill="#fff"/></g><g transform="rotate(45 18.4 19)"><circle cx="18.4" cy="6.199999999999999" r="4" fill="#fff"/><path d="M17.5,15 L16.7,9 H20.099999999999998 L19.299999999999997,15 Z" fill="#fff"/></g><g transform="rotate(90 18.4 19)"><circle cx="18.4" cy="6.199999999999999" r="4" fill="#fff"/><path d="M17.5,15 L16.7,9 H20.099999999999998 L19.299999999999997,15 Z" fill="#fff"/></g><g transform="rotate(135 18.4 19)"><circle cx="18.4" cy="6.199999999999999" r="4" fill="#fff"/><path d="M17.5,15 L16.7,9 H20.099999999999998 L19.299999999999997,15 Z" fill="#fff"/></g><g transform="rotate(180 18.4 19)"><circle cx="18.4" cy="6.199999999999999" r="4" fill="#fff"/><path d="M17.5,15 L16.7,9 H20.099999999999998 L19.299999999999997,15 Z" fill="#fff"/></g><g transform="rotate(225 18.4 19)"><circle cx="18.4" cy="6.199999999999999" r="4" fill="#fff"/><path d="M17.5,15 L16.7,9 H20.099999999999998 L19.299999999999997,15 Z" fill="#fff"/></g><g transform="rotate(270 18.4 19)"><circle cx="18.4" cy="6.199999999999999" r="4" fill="#fff"/><path d="M17.5,15 L16.7,9 H20.099999999999998 L19.299999999999997,15 Z" fill="#fff"/></g><g transform="rotate(315 18.4 19)"><circle cx="18.4" cy="6.199999999999999" r="4" fill="#fff"/><path d="M17.5,15 L16.7,9 H20.099999999999998 L19.299999999999997,15 Z" fill="#fff"/></g><circle cx="18.4" cy="19" r="5.200" fill="#fff"/><circle cx="18.4" cy="19" r="2.500" fill="#000"/></g><g transform="translate(510,537)"><path d="M18.400,14.800 C16.600,11.400 11.600,10.800 8,13.200 C5,15.400 4.800,19.800 7.600,22.800 C10.600,25.800 15.600,26.800 18.600,29.600 C19,25.200 22,22.800 26,20.800 C29.600,18.800 30.400,14.800 28.200,12.800 C25.400,10.600 20.600,11.400 18.400,14.800 Z" fill="#fff"/><path d="M18.400,28.600 C18.600,31 17,33.600 14.600,34.600 C12.600,35.400 10.800,34 11.600,32.400" fill="none" stroke="#fff" stroke-width="2" stroke-linecap="round"/><path d="M18.400,14.800 L17.600,5.600" stroke="#fff" stroke-width="1.100" fill="none"/><circle cx="17.800" cy="3.900" r="1.700" fill="none" stroke="#fff" stroke-width="1.200"/><path d="M16.400,5.200 C13,8.800 8,8.800 5.600,5.800 C5,5 5.400,4 6.400,4.400 M19.400,4.800 C22,3 26,3.400 28,5.600 C29,6.800 29.400,8 29.200,9" fill="none" stroke="#fff" stroke-width="2.200" stroke-linecap="round"/></g><g transform="translate(358,575)"><ellipse cx="19" cy="1.700" rx="1.300" ry="0.900" fill="#fff"/></g><g transform="translate(472,575)"><ellipse cx="18.600" cy="1.900" rx="1.500" ry="0.800" fill="#fff"/></g><g transform="translate(510,575)"><ellipse cx="18.600" cy="2" rx="0.800" ry="0.600" fill="#fff"/></g></g></svg>
<div class="a" style="left:492.8px;top:152.5px;width:37px;height:9px;background:#ffffe1;border:0.8px solid #666;box-sizing:border-box;box-shadow:1px 1px 1px rgba(0,0,0,.5)"></div>
<div class="t" style="left:496.4px;top:154px;font-size:6.4px;color:#1a1a1a;transform:scaleX(0.959);transform-origin:0 0;">Heart Card</div>
<svg style="left:0;top:0" width="600" height="584"><ellipse cx="446.6" cy="27.8" rx="30.2" ry="21.5" fill="none" stroke="#e8101c" stroke-width="2.2" transform="rotate(3 446.6 27.8)"/><path d="M73.3,293.3 L36,313" stroke="#f0101c" stroke-width="3.2" stroke-linecap="butt"/><path d="M22.5,320.8 L33.3,305 C35,311 38,316 43.5,320 C36,318.6 29,319 22.5,320.8 Z" fill="#f0101c"/></svg>
</body></html>
